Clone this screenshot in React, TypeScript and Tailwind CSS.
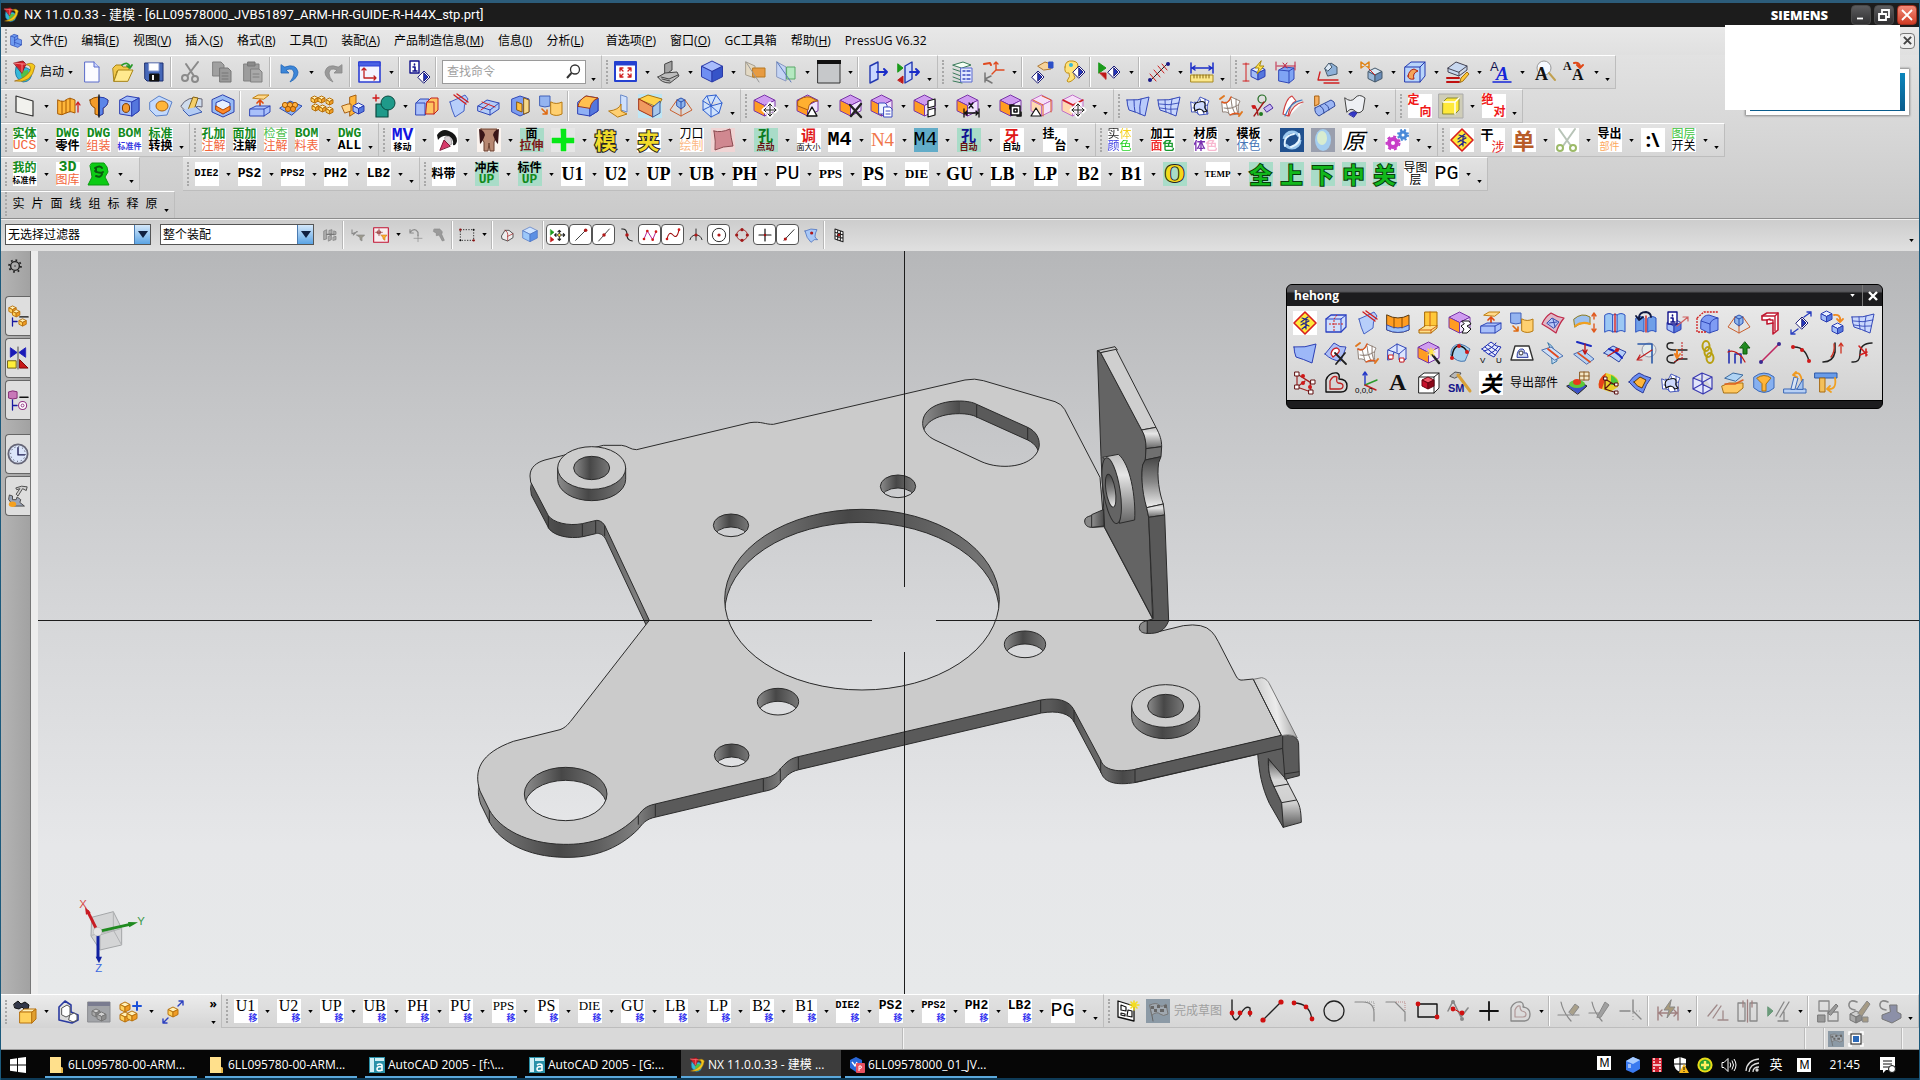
import React from 'react';

type Line = [string, string];
interface Item {
    icon?: string;
    lines?: Line[];
    bg?: string;
    text?: string;
    drop?: boolean;
    sep?: boolean;
    node?: React.ReactNode;
}

// ---------- drawing helpers ----------
const p = (d: string, fill = 'none', stroke = '#333', w = 1) => (
    <path d={d} fill={fill} stroke={stroke} strokeWidth={w} strokeLinejoin="round" strokeLinecap="round" />
);
const dot = (x: number, y: number, fill = '#d01818', r = 2) => <circle cx={x} cy={y} r={r} fill={fill} />;

const BLUE = ['#e6eeff', '#a3bdf8', '#5577dd', '#2c3fb4'];
const GOLD = ['#fff0b8', '#ffd15c', '#f09c24', '#b8720e'];
const SYNC = ['#cf9cf0', '#ff9c22', '#f1e4fd', '#7a35a8'];
const PALE = ['#f6dff8', '#ffd9b0', '#f4e4fa', '#c070c8'];
const GREY = ['#d0d0d0', '#a9a9a9', '#8c8c8c', '#777777'];

const cube = (x: number, y: number, s: number, c = BLUE) => {
    const h = s / 2;
    const q = s / 4;
    return (
        <g stroke={c[3]} strokeWidth="1" strokeLinejoin="round">
            <path d={`M${x + h} ${y}l${h} ${q}l${-h} ${q}l${-h} ${-q}z`} fill={c[0]} />
            <path d={`M${x} ${y + q}l${h} ${q}v${h}l${-h} ${-q}z`} fill={c[1]} />
            <path d={`M${x + s} ${y + q}l${-h} ${q}v${h}l${h} ${-q}z`} fill={c[2]} />
        </g>
    );
};
const move = p('M17 9v14M10 16h14M15 11l2-2 2 2M15 21l2 2 2-2M12 14l-2 2 2 2M22 14l2 2-2 2', 'none', '#fff', 3);
const moveIn = p('M17 10v12M11 16h12M15 12l2-2 2 2M15 20l2 2 2-2M13 14l-2 2 2 2M21 14l2 2-2 2', 'none', '#222', 1);
const triangle = p('M16 13l5 9H11z', '#fff', '#111', 1.4);
const sheet = (c = '#b9cbfb', s = '#3347b8') => p('M1 6Q12 7 23 3L19 22Q10 18 3 16Q1 11 1 6z', c, s);
const grid = p('M8 6Q8 13 9 18M15 5Q13 13 14 20M2 10Q12 12 22 9M3 14Q12 16 20 15', 'none', '#3347b8', 0.9);
const info = (
    <>
        {p('M3 1h9v12H3z', '#fff', '#10108a', 1.4)}
        {p('M7.5 4v1M6 7h2v4M6 11h4', 'none', '#10108a', 1.6)}
    </>
);
const eye = (x: number, y: number) => (
    <>
        {p(`M${x} ${y + 6}l6-6 6 6-6 6z`, '#fff', '#20207a')}
        {p(`M${x + 6} ${y + 2}l4 4-4 4z`, '#2438c0', '#20207a')}
    </>
);
const diamond = (
    <>
        {p('M0 0h24v24H0z', '#fff', 'none')}
        {p('M12 1l11 11-11 11L1 12z', '#ffe83a', '#d81e1e', 1.6)}
        {p('M9 7l6 2M15 6l-7 5M16 10l-8 4M10 12l6 3M14 14l-5 4M13 8v10', 'none', '#23238c', 1.2)}
    </>
);
const logo = (
    <>
        {p('M4 7Q1 18 11 22Q20 22 20 11L15 8z', '#35b8d8', '#146a98', 0.8)}
        {p('M9 11Q8 19 14 21Q18 17 16 10z', '#4fc24a', 'none')}
        {p('M3 21Q20 24 23 6Q20 1 13 5Q20 4 18 11Q14 18 3 21z', '#f3c91b', '#a06a10', 0.7)}
        {p('M2 3l9-2 3 3-4 9z', '#d3202a', '#811018', 0.8)}
        {p('M2 3l8 1 4 0M10 4v8', 'none', '#ff9a9a', 0.8)}
    </>
);
const swept = p('M4 8l9-4 6-3 3 4q-5 6-4 12l-9 6Q6 17 4 8z', '#b7cefa', '#4561c4');
const netUV = (s: string) => p('M3 8q6 4 9-5l9 4q-3 5-1 13l-9 1q-2-4-7-3zM7 8l3 12M12 5q0 8 4 15M17 5q-1 8 2 15M5 14q7 2 14-3', '#fff', s, 0.9);

const icons: Record<string, React.ReactNode> = {
    logo,
    part: <>{p('M3 5l5-3 6 2v5l6 2v8l-6 4-11-4z', '#6f9bf0', '#2142b0')}{p('M3 5l6 2v12M9 7l5-3M14 9l-5 3M9 15l11 4', 'none', '#2142b0')}</>,
    new: <>{p('M5 2h9l5 5v15H5z', '#fbfbff', '#5a6ccc')}{p('M14 2v5h5', '#cdd6ff', '#5a6ccc')}</>,
    open: <>{p('M2 8l3-3h5l2 2h6v4H6L3 21z', '#f2c84a', '#a88414')}{p('M3 21L7 10h15l-5 11z', '#ffe98e', '#a88414')}{p('M11 5q6-4 8 2M16 6l3 2 2-3', 'none', '#2b9a2b', 1.8)}</>,
    save: <>{p('M3 3h18v18H5l-2-2z', '#4668b8', '#1d2f70')}{p('M7 3h10v8H7z', '#fff', '#8899cc')}{p('M8 14h9v7H8z', '#111', '#111')}{p('M10 15h2v5h-2z', '#eee', 'none')}</>,
    cut: <>{p('M19 2L9 15M7 4l8 12', 'none', '#8a8a8a', 2)}<circle cx="6" cy="18" r="3" fill="none" stroke="#8a8a8a" strokeWidth="2" /><circle cx="16" cy="19" r="3" fill="none" stroke="#8a8a8a" strokeWidth="2" /></>,
    copy: <>{p('M3 2h8l3 3v11H3z', '#a0a0a0', '#808080')}{p('M10 8h8l3 3v11H10z', '#9a9a9a', '#777')}{p('M12 13h6M12 16h6M12 19h6', 'none', '#777')}</>,
    paste: <>{p('M3 4h15v17H3z', '#9c9c9c', '#808080')}{p('M7 2h7v4H7z', '#8a8a8a', '#777')}{p('M10 9h8l3 3v10H10z', '#a9a9a9', '#808080')}{p('M12 14h6M12 17h6', 'none', '#808080')}</>,
    undo: p('M3 5v8h8l-3-3q7-3 8 3 0 4-4 9 8-4 8-10Q18 3 7 7z', '#3c86d8', '#2266b8', 0.8),
    redo: p('M21 5v8h-8l3-3q-7-3-8 3 0 4 4 9-8-4-8-10Q6 3 17 7z', '#9a9a9a', '#888', 0.8),
    window: <>{p('M1 2h21v20H1z', '#f4f4ff', '#2c3fd4', 1.6)}{p('M1 2h21v4H1z', '#4a62e4', '#2c3fd4')}{p('M6 8v10h12M4 10l2-2 2 2M16 16l2 2-2 2', 'none', '#c02020', 1.3)}</>,
    info: <>{info}{eye(11, 11)}</>,
    fit: <>{p('M1 2h21v19H1z', '#fff', '#2440d0', 2)}{p('M1 2h21v3H1z', '#2440d0', '#2440d0')}{p('M9 11L6 8m0 3V8h3M14 11l3-3m-3 0h3v3M9 14l-3 3m0-3v3h3M14 14l3 3m-3 0h3v-3', 'none', '#d02020', 1.3)}</>,
    orient: <>{p('M8 4l7-3v9l-7 5z', '#a4a4a4', '#444')}{p('M1 17l7-4 12-1 2 4-9 7q-9 0-12-6z', '#bdbdbd', '#444')}{p('M4 17l8 2 9-4M5 19l8 2', 'none', '#444')}</>,
    cubeBlue: cube(1.5, 1, 21, ['#a8bcfc', '#6f8ff2', '#3654c8', '#2a3aa8']),
    clip: <>{p('M3 2l9 4v12l-9-3z', '#e3d9c4', '#a8a090')}{p('M10 8h12v9H10z', '#e79b42', '#b87820')}{p('M3 2l13 20', 'none', '#999')}</>,
    clip2: <>{p('M3 2l9 5v14l-9-4z', '#c4d4f4', '#8898c0')}{p('M13 7h8v12h-8z', '#b4e8c0', '#58a868')}{p('M3 2l14 20', 'none', '#5a78b8')}</>,
    square: <>{p('M1 2h22v21H1z', '#c6c8ca', '#333')}<rect x="0" y="0" width="24" height="4" fill="#111" /></>,
    door: <>{p('M4 6l8-4v17l-8 4z', '#c9d8ff', '#2338b0', 1.4)}{p('M11 12h10M18 9l3 3-3 3', 'none', '#1a2cc8', 2)}</>,
    doors: <>{p('M1 4l5 4-5 4z', '#1a9a1a', '#1a9a1a')}{p('M1 20l5-4v7z', '#c01818', '#c01818')}{p('M8 6l7-4v17l-7 4z', '#c9d8ff', '#2338b0', 1.4)}{p('M13 12h9M19 9l3 3-3 3', 'none', '#1a2cc8', 2)}</>,
    layers: <>{p('M3 5l10-3 8 3-9 3zM3 9l9 3M3 13l8 3M3 17l8 3M3 21l9 2', '#f4fff4', '#3a7a5a')}{p('M11 8h11v14H11z', '#e2e8ff', '#5a6ad0')}{p('M13 11h2M17 11h3M13 15h2M17 15h3M13 19h2M17 19h3', 'none', '#3a4ac0', 1.4)}</>,
    wcs: <>{p('M15 10V2M15 10h8M15 10l-4 4M13 4l2-2 2 2', 'none', '#e04a20', 1.4)}{p('M3 4l6-1 1 2', 'none', '#e04a20', 2)}{p('M4 22v-9M4 19l6-3M4 19l7 4', 'none', '#777', 1.5)}</>,
    hand: <>{eye(2, 11)}{p('M8 6l7-4 6 2v5l-7 1z', '#f7d39a', '#b07830')}{p('M19 2h4v6h-4z', '#2c50c8', '#2c50c8')}</>,
    parrot: <>{p('M4 7Q4 0 12 1q7 1 4 8-5 4-2 9-6 6-8 3 4-5 2-8Q3 14 4 7z', '#ffe27a', '#c09018')}{dot(10, 5, '#38b8d8')}{eye(12, 6)}</>,
    hide: <>{p('M1 3l7 5-7 5z', '#1a9a1a', '#1a9a1a')}{p('M2 13h6v6z', '#c01818', '#c01818')}{eye(10, 6)}</>,
    measure: <>{p('M3 21L21 3', 'none', '#222')}{p('M3 14l6 7M7 10l6 7M11 6l6 7M15 4l5 6', 'none', '#d02020')}{dot(3, 20, '#1a1a8a')}{dot(21, 4, '#1a1a8a')}</>,
    ruler: <>{p('M1 3v10M23 3v10M2 8h20M5 6L2 8l3 2M19 6l3 2-3 2', 'none', '#1a2cc8', 1.5)}{p('M1 15h22v7H1z', '#fce88c', '#a88a20')}{p('M4 15v3M7 15v3M10 15v3M13 15v3M16 15v3M19 15v3', 'none', '#8a6a10')}</>,
    hsize: <>{cube(8, 6, 14, BLUE)}{p('M3 3v18M0 4h6M0 21h6', 'none', '#d02020')}{p('M18 1l-6 7h4l-2 6 7-8h-4z', '#ffe04a', '#a88a10')}</>,
    wsize: <>{p('M5 10l5-3 10 1v11l-5 4-10-2z', '#7fa4f4', '#3048b8')}{p('M5 10l10 1v12M15 11l5-3', 'none', '#3048b8')}{p('M2 2v8M21 2v8M3 6h18M9 3l4 5M13 3L9 8', 'none', '#c02040')}</>,
    bolt: <>{p('M8 8l6-5 6 4v7l-9 2z', '#8db0d8', '#44586a')}{p('M8 8l4-5 3 4-4 4z', '#dce8f4', '#44586a')}{p('M3 12L1 20h20M7 23h15', 'none', '#d02020', 1.3)}</>,
    bow: <>{p('M1 2l8 6V2L1 8z', 'none', '#e08418', 1.5)}{cube(8, 8, 14, ['#dce8f4', '#9cb8d8', '#6a8cb8', '#44586a'])}{p('M9 9l6 6', 'none', '#d02020')}</>,
    boxhand: <>{p('M2 7l6-5h14v14l-5 6H2z', '#b8d4fa', '#2238b0')}{p('M2 7h15v15M17 7l5-5', 'none', '#2238b0')}{p('M5 16q1-6 6-7l4 2q-6 2-4 8-6 1-6-3z', '#f4a45a', '#b02010')}</>,
    pencilbox: <>{p('M2 8l8-6 11 4-8 6zM2 8v4l11 4v-4M13 16l8-6V6', '#c8d8f0', '#445')}{p('M1 18h12M1 22h12', 'none', '#c01010', 2)}{p('M14 22l1-4 6-6 2 2-6 7z', '#ffc83a', '#a07010')}</>,
    aa: <><text x="1" y="11" fontSize="13" fill="#141450" fontFamily="Liberation Sans">A</text><text x="7" y="20" fontSize="19" fontWeight="700" fontStyle="italic" fill="#1626d8" fontFamily="Liberation Serif">A</text>{p('M4 22h18', 'none', '#1626d8', 1.5)}</>,
    magA: <><circle cx="12" cy="8" r="7" fill="#f4f8ff" stroke="#999" />{p('M17 13l6 7', 'none', '#c0a050', 2)}<text x="3" y="20" fontSize="18" fontWeight="700" fill="#111" fontFamily="Liberation Serif">A</text></>,
    aToA: <><text x="0" y="10" fontSize="12" fontWeight="700" fill="#111" fontFamily="Liberation Serif">A</text><text x="9" y="20" fontSize="16" fontWeight="700" fill="#111" fontFamily="Liberation Serif">A</text>{p('M11 3q6-1 6 4M14 5l3 3 3-3', 'none', '#e04818', 2)}</>,
    plane: p('M3 2l17 5v15L3 18z', '#f2f2ee', '#333', 1.2),
    extrude: <>{p('M2 6q5 3 8 0t9 0v13q-5-3-9 0t-8 1z', '#ffb73a', '#a85a00')}{p('M6 7v13M10 6v13M14 4v14', 'none', '#a85a00')}{p('M22 18V9M20 11l2-3 2 3', 'none', '#d02020', 1.3)}</>,
    revolve: <>{p('M3 6q7-6 18 0 0 6-5 8v6q-4 3-8 0v-6Q3 12 3 6z', '#f39b28', '#8a4a00')}{p('M12 3q6 0 9 3 0 6-5 8v6l-4 2z', '#5c86e8', '#2a3fb0')}{p('M12 1v22', 'none', '#111', 1.4)}</>,
    hole: <>{p('M2 6l7-4 12 2v13l-7 5-12-2z', '#a3bdf8', '#2c3fb4')}{p('M2 6l12 2v14M14 8l7-4', 'none', '#2c3fb4')}{p('M14 8l7-4v13l-7 5z', '#5577dd', '#2c3fb4')}<ellipse cx="8" cy="14" rx="3.6" ry="4.400" fill="#f29a30" stroke="#7a3a00" /></>,
    emboss: <>{p('M1 8l9-6 13 6-5 13-11 1-6-6z', '#c4dafc', '#5a80c8')}<ellipse cx="13" cy="12" rx="6" ry="5" fill="#ffb53a" stroke="#a86010" /></>,
    fan: <>{p('M1 12Q7 1 22 5v8q-8-3-13 7z', '#cfdcec', '#667')}{p('M8 16l5-13 5 1-5 15z', '#f5cf6a', '#866414')}{p('M3 16l6 6 13-4-6-5', '#b4ccf4', '#3a5ab0')}</>,
    pocket: <>{p('M12 1l11 5v12l-11 5-11-5V6z', '#9abcf4', '#2a3fb0')}{p('M12 6l7 3v7l-7 4-7-4V9z', '#e8f0ff', '#2a3fb0')}{p('M5 12l7 4 7-4v4l-7 4-7-4z', '#ff8a2a', '#b84a00')}</>,
    draft: <>{p('M5 4l5-3h11l-5 4z', '#ffd98a', '#c08010')}{p('M12 16V7M9 9l3-3 3 3', 'none', '#e04a10', 1.7)}{p('M2 15l6-3h14v6l-6 4H2z', '#a9c0fa', '#3048b8')}{p('M2 15h14v7M16 15l6-3', 'none', '#3048b8')}</>,
    pattern: <>{p('M1 14l10-7 12 5-10 9z', '#8fb2f2', '#2a4ab0')}{[4, 9, 14].map((x) => <circle key={x} cx={x + 2} cy={11} r="2.6" fill="#ffb040" stroke="#a85a00" />)}{[7, 12].map((x) => <circle key={x} cx={x + 2} cy={15} r="2.6" fill="#f59320" stroke="#a85a00" />)}</>,
    cubes: <>{[[1, 2], [8, 2], [16, 4], [2, 10], [9, 11], [16, 13]].map(([x, y]) => <g key={`${x}-${y}`}>{cube(x, y, 7, GOLD)}</g>)}</>,
    mirror: <>{p('M9 3l6-2v17l-6 4z', '#ffb53a', '#a86010')}{p('M1 12l6-2h3v7l-6 2z', '#ffd58a', '#a86010')}{cube(12, 9, 11, BLUE)}</>,
    unite: <>{p('M4 10h12v13H4z', '#1f9a8a', '#0a4a40', 1.2)}<circle cx="16" cy="9" r="7" fill="#1f9a8a" stroke="#0a4a40" />{p('M4 1v6M1 4h6', 'none', '#d01818', 1.4)}</>,
    blocks: <>{p('M1 9l4-4h9v12l-4 4H1z', '#a9c0fa', '#3048b8')}{p('M1 9h9v12', 'none', '#3048b8')}{p('M12 8l4-4h7v12l-4 4h-8z', '#ffc460', '#c02020')}{p('M12 8h7v12', 'none', '#c02020')}</>,
    trim: <>{swept}{p('M8 1l12 9M11 0l11 8', 'none', '#d02020', 1.4)}</>,
    split: <>{p('M1 12l9-6 12 3v6l-9 6-12-4z', '#b4ccf8', '#3048b8')}{p('M1 12l12 4 9-7M13 16v5', 'none', '#3048b8')}{p('M5 8l13 5M4 16l8-6', 'none', '#d02020')}</>,
    wallblk: <>{p('M4 5l8-3 9 3v13l-9 4-8-4z', '#7d9df0', '#3048b8')}{p('M9 8l5 2v8l-5-2z', '#ffc040', '#8a5a10')}{p('M16 4l5 2v12l-5 2z', '#f5d88a', '#8a5a10')}</>,
    unform: <>{p('M1 2h10v10q-5 2-10 0z', '#94b4f0', '#4060b8')}{p('M12 8q5 3 11 0v12q-6 3-11 0z', '#ffd070', '#b87a10')}{p('M3 15l5 5M8 16v4H4', 'none', '#e06a10', 1.6)}</>,
    edgeblend: <>{p('M2 8l8-6 12 2v13l-8 5-12-2z', '#8fb0f5', '#2c3fb4')}{p('M14 9l8-5v13l-8 5z', '#5577dd', '#2c3fb4')}{p('M2 12q1-6 8-10l12 2q-7 3-8 10z', '#ffc050', '#a83a10')}</>,
    faceblend: <>{p('M14 1l6 2v15l-6-2z', '#cfe0fc', '#6a8ac8')}{p('M2 17q10-1 12-7v7l6 3-9 3z', '#ffcf70', '#b87a10')}</>,
    chamfer: <>{p('M0 0h24v24H0z', '#bfe6f4', 'none')}{p('M1 5l9-4 14 4-4 8z', '#ffd24a', '#a87410')}{p('M1 5l14 8v10L1 16z', '#f09a60', '#a83010')}{p('M15 13l7-6v12l-7 4z', '#a8c8ec', '#3a5a98')}</>,
    draftbody: <>{p('M8 6l4-2 4 2v6l-4 3-4-3z', '#8fb6ec', '#2a50b0')}{p('M8 6l4 2 4-2M12 8v7', 'none', '#2a50b0')}{p('M8 6L1 16l11 6 11-6-7-10M12 15v7', 'none', '#c86030')}</>,
    shell: p('M7 2l9-1 6 8-3 10-8 4-8-7V7zM3 7l8 5 11-3M11 12v11M7 2l4 10M16 1l-5 11M3 16l8-4 8 7', '#cfe2fc', '#2f5fd0'),
    s1: <>{cube(1, 1, 21, SYNC)}{move}{moveIn}</>,
    s2: <>{cube(1, 1, 21, SYNC)}{p('M2 7q5-5 12-4l8 4q-9-1-10 9l-10-4z', '#ffb030', '#a85a10')}{triangle}</>,
    s3: <>{cube(1, 1, 21, SYNC)}{p('M11 11l11 12M22 10L12 22', 'none', '#222', 2.4)}</>,
    s4: <>{cube(1, 1, 21, SYNC)}{p('M9 9h6l2 2v9H9z', '#eef4ff', '#3a4ac0')}{p('M14 13h6l2 2v8h-8z', '#fff', '#3a4ac0')}{p('M16 17h4M16 20h4', 'none', '#3a4ac0')}</>,
    s5: <>{cube(1, 1, 21, SYNC)}{p('M15 7l7-2v7l-7 2zM15 16l7-2v7l-7 2z', '#fff', '#111', 1.2)}</>,
    s6: <>{cube(1, 1, 21, SYNC)}{p('M8 15v8M23 15v8M9 19h13M11 17l-2 2 2 2M20 17l2 2-2 2M13 9l4 5M17 9l-4 5', 'none', '#111', 1.3)}</>,
    s7: <>{cube(1, 1, 21, SYNC)}{p('M12 12h9v9h-9z', '#fff', '#111', 1.4)}{p('M11 11h4M11 11v4M22 22h-4M22 22v-4M15 15h3v3h-3z', 'none', '#111', 1.6)}</>,
    s8: <>{cube(1, 1, 21, PALE)}{p('M12 2l9 4v12M3 6l10 5v11', 'none', '#e05a20')}{p('M6 14l5 8H1z', '#fff', '#111', 1.2)}</>,
    s9: <>{cube(1, 1, 21, PALE)}{p('M2 6l10 5 10-5', 'none', '#d02020', 1.5)}{move}{moveIn}</>,
    ruled: <>{sheet()}{p('M8 6Q8 13 9 18M15 5Q13 13 14 20', 'none', '#3347b8')}</>,
    mesh: <>{sheet('#cad8fd')}{grid}</>,
    nside: <>{netUV('#3347b8')}{p('M7 17q-3-8 4-9 7-2 6 4-1 2 2 5l-3 1q-3-5-9-1z', '#cdd9fd', '#111', 1.2)}</>,
    enlarge: <>{netUV('#8a7a70')}{p('M3 8q6 3 9-5M11 21q5-3 9-1', 'none', '#e05a20', 1.4)}{p('M1 5l4-3M20 22l3-4', 'none', '#e07820', 2)}</>,
    xform: <><circle cx="12" cy="5" r="4" fill="none" stroke="#206a20" strokeWidth="1.2" />{p('M2 12q5 0 6 9M4 22L14 8', 'none', '#a01818', 1.3)}{p('M14 14l6-4 3 4-6 4z', '#c8b8f4', '#4a2aa0')}{dot(4, 13)}{dot(11, 20, '#207a20')}</>,
    ribbon: <>{p('M2 20q3-16 9-18l4 5q-6 2-8 15zM8 22q4-12 14-14', '#fff', '#d04040', 1.2)}{p('M4 22q5-14 17-16', 'none', '#3a7ac0', 1.2)}</>,
    tube: <>{p('M3 2h4v8l-4 2z', '#f8b060', '#a86010')}{p('M3 14l16-8q4 1 4 6L7 22q-5-3-4-8z', '#9cb6f4', '#2f489a')}{p('M8 12q4 2 4 7M13 10q4 2 4 6', 'none', '#2f489a')}</>,
    flag: <>{p('M2 4q6 5 10 0t10 0l-2 12q-4 5-8 1t-8 1z', '#eef0f4', '#444')}{p('M6 20q4-4 8-1l-3 4z', '#3338c8', '#2a2aa0')}</>,
    ybox: <>{p('M0 0h24v24H0z', '#cfcdb8', '#aaa')}{p('M4 8l4-4h12v12l-4 4H4z', '#ffe93a', '#8a8a30')}{p('M4 8h12v12M16 8l4-4', 'none', '#fff', 1.4)}</>,
    brush: <>{p('M0 0h24v24H0z', '#fff', 'none')}{p('M3 7Q8 0 15 3q8 3 8 10-1 5-4 4 1-7-5-9-6-1-10 4z', '#161616', 'none')}{p('M11 9q4-2 6 1l1 6-6 3z', '#d8d0d4', '#777', 0.6)}{p('M6 22l4-10 6 6z', '#d8386a', '#801838')}</>,
    legs: <>{p('M0 0h24v24H0z', '#fbf3ee', 'none')}{p('M4 1h16q1 7-3 13v9h-4l-1-8-1 8H7v-9Q2 8 4 1z', '#b88872', '#6a4030')}{p('M2 1q5 1 6 6-3 8-5 9zM22 1q-5 1-6 6 3 8 5 9z', '#3a1618', 'none')}</>,
    plus: <><rect width="24" height="24" fill="#e6e6e6" />{p('M10 1h5v9h8v5h-8v8h-5v-8H1v-5h9z', '#06e816', '#06e816', 0.5)}</>,
    cloth: <>{p('M0 0h24v24H0z', '#f0d4d4', 'none')}{p('M3 3q7 2 16-2 1 9 3 17-10 0-18 4 1-8-1-19z', '#d08890', '#8a4a50')}</>,
    swirl: <><rect width="24" height="24" fill="#20508e" /><circle cx="12" cy="12" r="8" fill="none" stroke="#9cc8ee" strokeWidth="3" strokeDasharray="20 6" />{p('M5 18Q3 8 14 6M19 6q3 9-8 13', 'none', '#e4f4ff', 2)}</>,
    orb: <><rect width="24" height="24" fill="#9a9fae" /><ellipse cx="12" cy="12" rx="8" ry="11" fill="#a4cdf0" /><ellipse cx="11" cy="10" rx="5" ry="7" fill="#d8ecd0" /></>,
    gears: <><rect width="24" height="24" fill="#fff" /><circle cx="8" cy="15" r="4" fill="none" stroke="#c83cc8" strokeWidth="4" /><circle cx="8" cy="15" r="6.5" fill="none" stroke="#c83cc8" strokeWidth="2" strokeDasharray="3 3" /><circle cx="18" cy="7" r="3" fill="none" stroke="#4a8ad8" strokeWidth="3" /><circle cx="18" cy="7" r="5" fill="none" stroke="#4a8ad8" strokeWidth="2" strokeDasharray="2 2" /></>,
    scissors: <><rect width="24" height="24" fill="#fff" />{p('M4 1l12 17M20 1L8 18', 'none', '#b8c4b8', 2)}<circle cx="5" cy="20" r="3" fill="none" stroke="#9cba68" strokeWidth="2" /><circle cx="18" cy="20" r="3" fill="none" stroke="#9cba68" strokeWidth="2" /></>,
    genie: <>{p('M5 1h12l3 4 1 5-3 5 4 8H1l4-8-1-6-1-5z', '#0ccc14', '#0a9a10')}{p('M8 6q5-3 7 0M8 9q5 3 8 1M9 14q5 2 6-2M9 6v4', 'none', '#0a5a10', 2)}</>,
    diamond,
    // selection bar
    sGrey: <>{p('M3 6l4-2v14l-4 1zM11 5l4-1v6l-4 1zM10 14l4-2v7l-4 2zM18 6l3 1v4l-3 1zM17 15l4-1v5l-4 1z', '#aaa', '#777')}{p('M7 11h11', 'none', '#777', 2)}</>,
    sFilter: <>{p('M3 4v6l8-3M5 12l5-5', 'none', '#888', 1.6)}{p('M10 12h12l-4 4v5l-3-2v-3z', '#9c9a8c', '#888')}</>,
    sRed: <>{p('M1 1h22v22H1z', '#f8eef0', '#c01030', 1.6)}{p('M9 3v10M4 8h10M7 6h4v4H7z', 'none', '#8a2020')}{p('M12 12h9l-3 4v4l-3-2v-2z', '#ffb030', '#c06a10', 0.8)}</>,
    sUndo: <>{p('M3 8q7-8 12 0v5M3 4v5h5', 'none', '#8a8a8a', 1.8)}{p('M9 17h12M15 12v10', 'none', '#8a8a8a')}</>,
    sBrush: p('M5 3h8l4 4-1 4 4 9-3 1-5-9-4 1V9L4 7z', '#9a9a9a', '#888'),
    sMarq: <><rect x="2" y="4" width="20" height="16" fill="none" stroke="#222" strokeWidth="1.3" strokeDasharray="2 2" />{dot(2, 4, '#8a1010', 1.8)}{dot(22, 20, '#8a1010', 1.8)}{dot(22, 4, '#111', 1.4)}{dot(2, 20, '#111', 1.4)}</>,
    sEdge: <>{p('M4 13l5-8h6l6 5v6l-8 5-8-3z', '#eee', '#333', 1.2)}{p('M9 5q5 2 4 9v6M13 14l8-4', 'none', '#a01010')}</>,
    sCube: cube(1, 0, 22, ['#cfe4ff', '#9cc8fa', '#5c90e4', '#4a70c0']),
    pSnap: <>{p('M1 4l5 4-5 4z', '#1a9a1a', '#1a9a1a')}{p('M1 15l5 4-5 3z', '#c01818', '#c01818')}{p('M14 5v15M7 12h15M12 7l2-2 2 2M12 18l2 2 2-2M9 10l-2 2 2 2M20 10l2 2-2 2', 'none', '#222', 1.6)}<circle cx="14" cy="12" r="2.400" fill="#ffe24a" stroke="#333" /></>,
    pEnd: <>{p('M4 20L20 4', 'none', '#222', 1.3)}{dot(19, 5, '#b01818', 2.6)}</>,
    pMid: <>{p('M4 21L20 3', 'none', '#222', 1.3)}{dot(12, 12, '#b01818', 2.6)}</>,
    pHook: <>{p('M4 3q8-1 8 9 0 8 8 9', 'none', '#222', 1.6)}{dot(12, 12, '#b01818', 2.6)}</>,
    pZig: <>{p('M3 18L8 6l8 13 5-12', 'none', '#b01890', 1.4)}{dot(3, 18)}{dot(8, 6)}{dot(16, 19)}{dot(21, 7)}</>,
    pSpl: <>{p('M3 18q3-13 9-6t9-8', 'none', '#a01010', 1.6)}{dot(3, 18)}{dot(21, 4)}</>,
    pInt: <>{p('M3 19q2-7 9-7t9 7M12 3v17', 'none', '#222', 1.4)}{dot(12, 12, '#b01818', 2.4)}</>,
    pCtr: <><circle cx="12" cy="12" r="10" fill="none" stroke="#222" strokeWidth="1.4" />{dot(12, 12, '#b01818', 2.4)}</>,
    pQuad: <><circle cx="12" cy="12" r="8" fill="none" stroke="#a02020" strokeWidth="1.3" />{dot(12, 4, '#a01818', 2.4)}{dot(12, 20, '#a01818', 2.4)}{dot(4, 12, '#a01818', 2.4)}{dot(20, 12, '#a01818', 2.4)}</>,
    pPlus: <>{p('M12 3v18M3 12h18', 'none', '#111', 1.8)}{dot(12, 12, '#a01010', 1.8)}</>,
    pOn: <>{p('M6 20L21 4', 'none', '#222', 1.4)}{dot(8, 18, '#b01818', 2.4)}</>,
    pFace: <>{p('M3 6q9-5 18-2-3 5-3 10 0 3 4 5-5-2-10 4-7-6-9-17z', '#a9c8f6', '#3a62b8')}{dot(13, 9, '#b01818', 2.4)}</>,
    pGrid: <>{p('M6 3l12 4v15L6 18zM6 8l12 4M6 13l12 4M10 5v15M14 6v15', '#fff', '#222', 1.6)}{dot(12, 12, '#b01010', 1.8)}</>,
    // floating palette
    h2: <>{p('M2 8l5-4h15v12l-5 5H2z', '#cfdefc', '#2a3fc0', 1.3)}{p('M2 8h15v13M17 8l5-4', 'none', '#2a3fc0')}<path d="M13 4l-3 4v13M5 13h14" fill="none" stroke="#d02020" strokeDasharray="2 1" /></>,
    h4: <>{p('M1 4q11 6 22 0v15q-11 5-22 0z', '#ff9d20', '#5a3a10')}{p('M1 14q11 6 22 0v5q-11 5-22 0z', '#9cc0f8', '#3a50b0')}{p('M8 7v10M16 7v10', 'none', '#8a4a00')}</>,
    h5: <>{p('M8 1h12v14H8z', '#ffc83a', '#a86a00')}{p('M8 15l-6 4v3h12l6-5v-2', '#ffdf8a', '#a86a00')}{p('M13 1v14M2 19h12v3M14 19l6-4', 'none', '#d06010')}</>,
    h6: <>{cube(1, 1, 21, SYNC)}{p('M14 10h7l2 3-4 2 4 3-4 4h-5l2-4-3-3 3-2z', '#fff', '#111')}</>,
    h9: <>{p('M1 13q3-7 9-11 6 4 13 5-5 6-8 15Q8 17 1 13z', '#dfb8c8', '#c02848', 1.2)}{p('M6 12l5-5 7 4-5 6z', '#b8c8f8', '#3a50b0')}{p('M8 12l8-1M12 8l2 8', 'none', '#3a50b0')}</>,
    h10: <>{p('M2 8q8-7 16-2v7q-8-3-15 3z', '#9cc0ee', '#8a7a20')}{p('M3 15q7-5 15-2', 'none', '#f0a020', 2)}{p('M22 3v5M22 13v7M20 5l2-3 2 3M20 18l2 3 2-3', 'none', '#e05a20', 1.4)}</>,
    h11: <>{p('M2 4q4-3 8 0v17q-4-3-8 0zM14 4q4-3 8 0v17q-4-3-8 0z', '#9cc8f4', '#2a50c0')}{p('M10 4q2-2 4 0v17q-2-2-4 0z', '#e8e8f8', '#2a50c0')}{p('M12 3v18', 'none', '#d02020', 1.4)}</>,
    h12: <>{p('M2 7q4-3 8 0v14q-4-3-8 0zM14 7q4-3 8 0v14q-4-3-8 0z', '#6f9fe8', '#2a50c0')}{p('M12 5v16', 'none', '#d02020', 1.4)}{p('M5 7q0-6 7-6 5 1 5 5M2 5l3 4 4-3', 'none', '#101840', 1.8)}</>,
    h13: <>{cube(2, 8, 14, BLUE)}{info}{p('M12 15l11-9M18 6h5v4', 'none', '#d06060', 1.2)}</>,
    h14: <>{p('M5 10q2-6 8-6l9 3v12l-9 3-8-4z', '#7f9cf4', '#3048b8')}{p('M5 10l9 3V22M14 13q1-5 8-6', 'none', '#3048b8')}<path d="M1 7l7-6h14M1 7v14h10" fill="none" stroke="#d02020" strokeDasharray="2 1" strokeWidth="1.3" /></>,
    h16: <>{p('M4 5l5-3h11v17l-5 4V12l-6 1V9H4z', '#fff', '#c01830', 1.6)}{p('M4 5h13v15M17 5l3-3M12 9h3v3M9 9l3-1', 'none', '#c01830', 1.4)}</>,
    h17: <>{eye(7, 6)}{p('M15 6l7-5M18 1h4v4M9 18l-7 5M2 19v4h4', 'none', '#2c40c0', 1.4)}</>,
    h18: <>{cube(1, 0, 11, BLUE)}{cube(12, 12, 11, BLUE)}{p('M14 4q7-1 6 6M17 8l3 3 3-3', 'none', '#f08a20', 1.8)}</>,
    i1: sheet('#9db8f8', '#2c3fb4'),
    i2: <>{p('M1 13L10 2q6 5 12 4l-5 14Q8 20 1 13z', '#aebff6', '#3347b8')}{p('M7 13q1-6 6-6 4 2 1 5l-5 4z', '#fff', '#d02020', 1.3)}{p('M11 12l11 11M21 12L12 23', 'none', '#222', 1.8)}</>,
    i4: <>{p('M2 9l9-6 9 4v11l-4 3-3-2v-6l-5-2-2 7-4 1z', '#dce6fe', '#3347b8')}{p('M2 9l6 2M11 3v8M20 7l-7 6M15 21l5-3', 'none', '#3347b8')}{p('M3 14h4v4H3zM14 17h4v4h-4z', '#fff', '#d02020')}</>,
    i5: <>{cube(1, 1, 21, SYNC)}{p('M14 12l8 10', 'none', '#222', 2.4)}{p('M14 7v8M10 11h8M11 8l6 6M17 8l-6 6', 'none', '#ffe24a', 1.2)}</>,
    i6: <>{p('M3 14Q2 4 12 3q5 1 10 5l-5 12Q9 22 3 14z', '#a8d0ec', '#4a78b0')}{p('M4 17q1-13 8-12 5 1 7 6', 'none', '#111', 1.4)}{dot(4, 17)}{dot(11, 5)}{dot(19, 11)}</>,
    i7: <>{p('M3 8l9-7q5 5 10 5l-7 10Q9 14 3 8zM6 6l10 8M9 4l9 6M5 10q8-2 12-8M10 13q6-2 9-7', '#e8ecff', '#1a2ab0')}<text x="1" y="22" fontSize="8" fontFamily="Liberation Sans">V</text><text x="17" y="22" fontSize="8" fontFamily="Liberation Sans">U</text></>,
    i8: <>{p('M5 5h14l4 14H1z', '#fff', '#333', 1.4)}{p('M7 16q0-9 6-8 2 1 1 4h3l1 4z', '#cfd8f4', '#2a3aa0')}<circle cx="11" cy="12" r="2" fill="#fff" stroke="#333" /></>,
    i9: <>{p('M7 2q8 4 9 18l-5 3Q11 10 7 2z', '#c4dcf4', '#3a78a8')}{p('M1 9l9-3 12 9-8 4z', '#cfe0f8', '#4a70b0')}{p('M7 8l10 8', 'none', '#e04820', 1.8)}</>,
    i10: <>{p('M2 13l9-4 11 9-7 5z', '#b8d4f4', '#4a6ab0')}{p('M6 12l12 9', 'none', '#e05020', 1.6)}{p('M5 1l14 4', 'none', '#1a2ac0', 2)}{p('M13 3v9M11 9l2 4 2-4', 'none', '#c01818', 1.4)}</>,
    i11: <>{p('M1 12q5-5 9-7 6 3 13 6l-7 10Q8 15 1 12z', '#b8d0f8', '#2a40a0')}{p('M6 8q7 2 13 9', 'none', '#1a2ac0', 2)}{p('M5 15l11-7', 'none', '#c01818', 1.4)}{dot(14, 9)}</>,
    i12: <><circle cx="15" cy="9" r="7" fill="#e4ecec" stroke="#99a" />{p('M4 3h14v19', 'none', '#2a58a8', 1.6)}{p('M18 9L4 18M6 14l-3 5 5 0', 'none', '#c02020', 1.2)}</>,
    i13: <>{p('M8 2Q2 1 2 5t7 4h13M8 14q-6 0-6 4t7 4l4-4h9', 'none', '#222', 1.4)}{p('M12 9v7M10 13l2 4 3-4', 'none', '#f08020', 2)}<path d="M17 1v18M9 21l9-4" fill="none" stroke="#c01818" strokeDasharray="2 1" /></>,
    i14: <>{[3, 9, 15].map((y) => <ellipse key={y} cx={9 + y / 3} cy={y + 2} rx="3.5" ry="5" fill="none" stroke="#b8a010" strokeWidth="2" />)}</>,
    i15: <>{p('M2 22V9M8 22v-9h6v9', 'none', '#2430b0', 1.6)}{p('M1 11q6-3 14 5l3 5', 'none', '#c01818', 1.3)}{p('M18 1l5 6h-3v6h-4V7h-3z', '#1f8a1f', '#0a5a0a')}</>,
    i16: <>{p('M3 21L21 3', 'none', '#c02860', 1.6)}{dot(3, 21, '#3a2a90')}{dot(21, 3, '#3a2a90')}</>,
    i17: <>{p('M4 6q12-1 16 14', 'none', '#222', 1.4)}{dot(4, 6)}{dot(13, 9)}{dot(20, 20)}</>,
    i18: <>{p('M3 21q10 0 12-10V2', 'none', '#222', 1.6)}{p('M14 3q1 8-3 13M21 3v9M19 5l2-3 2 3', 'none', '#d03020', 1.3)}</>,
    i19: <>{p('M1 21q8 1 8-8 0-11 12-11', 'none', '#222', 1.5)}{p('M8 5l8 9M9 14l7-3M15 8v7', 'none', '#d02020', 1.6)}</>,
    j1: <>{p('M4 3v13l14 5-1-10zM4 3l14 9M4 16l8-6', 'none', '#a02020', 1.2)}{p('M2 1h4v4H2zM2 14h4v4H2zM16 19h4v4h-4zM18 9h4v4h-4z', '#fff', '#601010')}{dot(10, 5)}{dot(10, 12)}{dot(17, 16)}</>,
    j2: <>{p('M2 21V9q3-8 11-7 3 1 2 6 8 0 8 7 0 6-6 6z', 'none', '#111', 1.4)}{p('M6 18v-8q3-6 7-4-1 5 1 6 5 0 5 3 0 3-4 3z', 'none', '#c02020', 1.3)}</>,
    j3: <>{p('M10 14V2M8 4l2-3 2 3', 'none', '#2438c8', 1.4)}{p('M10 14l12-5', 'none', '#2a9a2a', 1.4)}{p('M10 14l11 5', 'none', '#c02020', 1.4)}<text x="0" y="22" fontSize="8" fontFamily="Liberation Sans">0,0,0</text></>,
    j4: <text x="3" y="19" fontSize="24" fontWeight="700" fontFamily="Liberation Serif" fill="#111">A</text>,
    j5: <>{p('M2 6l5-4h15v15l-5 5H2z', '#fff', '#222')}{p('M2 6h15v16M17 6l5-4', 'none', '#222')}{cube(5, 6, 12, ['#f45a6a', '#c8102a', '#8a0818', '#6a0410'])}</>,
    j6: <><text x="0" y="21" fontSize="11" fontWeight="700" fill="#14148a" fontFamily="Liberation Sans">SM</text>{p('M2 5l5-4 6 1-2 3-4 2z', '#b8b8b8', '#555')}{p('M10 4l12 16', 'none', '#d8a038', 3)}</>,
    j9: <>{p('M1 15l11-5 9 5-9 8z', '#3a50c8', '#222')}<ellipse cx="11" cy="13" rx="8" ry="4" fill="#5cc83a" /><ellipse cx="11" cy="11" rx="4" ry="3" fill="#e83a1a" />{p('M14 1h9v8h-9zM14 5h9M18 1v8', '#f4e8c8', '#8a5a20')}</>,
    j10: <>{p('M2 17Q0 8 9 2l7 2q8 5 5 12l-8 5z', '#e8d02a', 'none')}{p('M2 17Q0 8 9 2q-1 8-4 16z', '#e8401a', 'none')}{p('M14 4q8 4 7 10l-7 0z', '#4ac83a', 'none')}{p('M8 8v10l12 4M8 8l10 6M8 18l6-6', 'none', '#5a1010', 1.2)}{p('M7 6h3v3H7zM18 12h3v3h-3zM18 20h3v3h-3z', '#fff', '#5a1010')}</>,
    j11: <>{p('M1 11q4-6 10-9 5 3 12 5-5 6-8 15Q7 19 1 11z', '#6a8cf0', '#2a3a9a')}{p('M6 11l6-5 6 3-4 8q-5-1-8-6z', '#ffb53a', '#5a3a10')}</>,
    j13: p('M3 7l9-5 10 4v12l-9 5L3 18zM3 7l10 4 9-5M13 11v12M12 2v11l10 5M12 13l-9 5', '#e2e6fb', '#3a3ab0', 1.2),
    j14: <>{p('M4 7l8-5 10 2-7 6z', '#b0d4f4', '#3a6aa0')}{p('M1 15l7-3h14v5l-6 5H3z', '#ffc860', '#a87010')}{p('M4 13l10 0 8-4', 'none', '#e06020', 1.4)}</>,
    j15: <>{p('M2 6q10-8 20 0v11q-10 9-20 0z', '#86b0f0', '#3a68b8')}{p('M5 7q7-5 14 0l-5 6v7h-4v-7z', '#ffb53a', '#a87010')}</>,
    j16: <>{p('M1 18h22v4H1z', '#b8d0f4', '#3a68b8')}{p('M8 18L11 6l4 1-3 11z', '#d8e4f4', '#3a68b8')}{p('M10 4q8-6 9 8M13 1l-3 3 4 2', 'none', '#f09a20', 1.8)}{p('M14 18l6-10v10z', '#a4c4f0', '#3a68b8')}</>,
    j17: <>{p('M1 2h22v5H1z', '#6a9ce8', '#2a58a8')}{p('M6 7h5v14H6z', '#f4c05a', '#a86a10')}{p('M21 7q2 12-7 11M16 15l-3 3 4 3', 'none', '#f0a020', 1.8)}</>,
    // bottom bars
    binoc: <>{p('M1 4l4-3 3 3 4-2 4 3-1 4-4 0-2-2-3 2-4-1z', '#33384a', '#111')}{p('M7 12l4-3h12l-4 3z', '#fff0b8', '#b8720e')}{p('M7 12h12v11H7z', '#ffd15c', '#b8720e')}{p('M19 12l4-3v10l-4 4z', '#e0a030', '#b8720e')}</>,
    wire: <>{p('M3 7l6-6 6 4v7l7 3v5l-6 3-13-3z', 'none', '#2a3aa0', 1.6)}{p('M6 8l5-3 3 2v8l-4 2-4-2zM14 15l4-2 3 2v5l-4 2-4-2z', '#fff', '#555')}</>,
    greyAsm: <>{p('M1 2h22v20H1z', '#a2a4a8', '#8a8c90')}{p('M1 2h22v4H1z', '#7a7c90', 'none')}{cube(5, 9, 8, GREY)}{cube(10, 12, 9, GREY)}</>,
    addCmp: <>{cube(2, 2, 10, GOLD)}{cube(2, 12, 10, GOLD)}{cube(9, 11, 10, GOLD)}{p('M19 2v8M15 6h8', 'none', '#1a50d8', 2)}</>,
    moveCmp: <>{cube(7, 7, 10, GOLD)}{p('M17 6l4-4M18 1h4v4M7 18l-4 4M2 19v4h4', 'none', '#2c40c0', 1.4)}</>,
    sketch: <>{p('M2 2l16 5v15L2 18z', '#fff', '#111', 1.3)}{p('M5 6l5 2v4l-5-1zM5 14l4 1v2l-4-1zM12 11l4 1v6l-5-1z', 'none', '#111', 1.2)}{p('M18 2v9M14 6h9M15 3l6 6M21 3l-6 6', 'none', '#f4dc20', 1.6)}</>,
    finish: <><rect width="24" height="24" fill="#8c9aa6" />{p('M7 22L4 6', 'none', '#666')}{p('M4 6q6-3 9 0t7-1l2 10q-5 3-8 0t-8 1z', '#a0a8b0', '#777')}{p('M5 7h3v3H5zM11 6h3v3h-3zM8 10h3v3H8zM14 10h4v3h-4zM18 6h3v3h-3z', '#666', 'none')}</>,
    bSpl: <>{p('M3 1v14q3 11 8 1t10-7v8', 'none', '#222', 1.4)}{dot(3, 14, '#d01010', 2.4)}{dot(11, 14, '#d01010', 2.4)}{dot(21, 14, '#d01010', 2.4)}</>,
    bLine: <>{p('M3 21L21 3', 'none', '#222', 1.3)}{dot(3, 21, '#d01010', 2.6)}{dot(21, 3, '#d01010', 2.6)}</>,
    bArc: <>{p('M3 4q16 0 18 17', 'none', '#222', 1.3)}{dot(3, 4, '#d01010', 2.4)}{dot(15, 8, '#d01010', 2.4)}{dot(21, 20, '#d01010', 2.4)}</>,
    bCircle: <circle cx="12" cy="12" r="10" fill="none" stroke="#222" strokeWidth="1.3" />,
    bFillet: <>{p('M2 3h8q11 0 11 11v8', 'none', '#888', 1.2)}<path d="M12 3h9v9" fill="none" stroke="#999" strokeDasharray="1 1" /></>,
    bChamfer: <>{p('M2 3h9l10 10v9', 'none', '#888', 1.2)}<path d="M12 3h9v9" fill="none" stroke="#b88" strokeDasharray="1 1" /></>,
    bRect: <>{p('M3 5h19v13H3z', 'none', '#111', 1.4)}{dot(3, 5, '#d01010', 2.4)}{dot(22, 18, '#d01010', 2.4)}</>,
    bStudio: <>{p('M2 12l5-10 8 16 7-9', 'none', '#888', 1.6)}{p('M6 9l9 5', 'none', '#d01010')}{dot(7, 10, '#d01010', 2.4)}{dot(16, 14, '#d01010', 2.4)}{dot(7, 3, '#888')}{dot(16, 20, '#888')}</>,
    bPlus: p('M12 3v18M3 12h18', 'none', '#111', 1.8),
    bOff: <>{p('M3 22V9q3-7 10-6 3 1 2 5 7 1 7 7 0 7-6 7z', 'none', '#888', 1.3)}{p('M7 18v-7q2-5 5-4 0 4 2 5 4 1 4 3 0 3-3 3z', 'none', '#b09898', 1.2)}</>,
    bTrim1: <>{p('M4 3q2 10 10 19M1 16h14M10 16h12', 'none', '#888', 1.2)}{p('M12 13l6-8 4 3-6 8z', '#a9a08a', '#888')}</>,
    bTrim2: <>{p('M4 3q2 10 10 19M1 14h14', 'none', '#888', 1.2)}{p('M9 18l8-15 4 3-8 12z', '#a0a0a0', '#888')}</>,
    bTrim3: <>{p('M14 1v12M1 12h10M14 12l8 8', 'none', '#888', 1.4)}<path d="M14 12h9M14 14v9" fill="none" stroke="#999" strokeDasharray="1 2" /></>,
    bDim: <>{p('M2 8v13M22 8v13M3 14h18M6 11l-3 3 3 3M18 11l3 3-3 3', 'none', '#a08080', 1.4)}{p('M15 1l-7 10h5l-2 8 8-11h-5z', '#a89a7a', '#888')}</>,
    bGeo: p('M3 17L12 6M8 19L16 7M13 21h10M18 21v-9', 'none', '#a08a8a', 1.3),
    bSym: <>{p('M2 4h7v18H2zM14 4h7v18h-7z', 'none', '#888', 1.3)}{p('M11.5 1v22M7 2v6M16 2v6', 'none', '#a08080', 1.3)}</>,
    bCon: <>{p('M1 8l5 4-5 5z', '#6a9a7a', '#6a9a7a')}{p('M9 17l8-14M13 18l9-15M11 22h10M17 22v-9', 'none', '#888', 1.3)}</>,
    bEnd1: <>{p('M3 2h10v10H3zM12 13h10v9H12z', 'none', '#888', 1.3)}{p('M2 16h7v7H2z', '#999', '#777')}{p('M12 14l8-9 2 2-7 9z', '#9a9a9a', '#777')}</>,
    bEnd2: <>{p('M10 3q-7-3-8 2t6 6', 'none', '#888', 1.6)}{cube(3, 12, 12, GREY)}{p('M11 14l9-12 3 3-8 12zM16 18h5v5h-5z', '#a59a84', '#888')}</>,
    bEnd3: <>{p('M10 3q-7-3-8 2t6 6', 'none', '#888', 1.6)}{p('M12 6h7v7l4 2v4l-9 5-10-4v-4l8-3z', '#8c90a8', '#777')}</>,
    // resource tabs
    tAsm: <>{cube(2, 1, 8, GOLD)}{cube(6, 5, 8, GOLD)}{p('M14 13h9', 'none', '#111', 1.5)}{p('M6 14v9M6 18h5', 'none', '#1a1aa0', 1.4)}{cube(13, 15, 8, GOLD)}</>,
    tCon: <>{p('M4 1l7 5-7 5zM20 1l-7 5 7 5z', '#1a1ab8', '#1a1ab8')}{p('M12 0v24', 'none', '#111', 0.8)}{p('M1 15h9v8H1z', '#ffee3a', '#6a5a10')}{p('M14 14l9 9h-9z', '#c81818', '#700')}</>,
    tPart: <>{p('M2 3q4-2 9 0v7q-5 2-9 0z', '#c878b8', '#802870')}{p('M14 9h9', 'none', '#111', 1.4)}{p('M6 12v11M6 18h5', 'none', '#1a1aa0', 1.4)}<circle cx="17" cy="18" r="4.4" fill="#fff" stroke="#903080" strokeWidth="1.2" /><circle cx="17" cy="18" r="1.6" fill="none" stroke="#903080" /></>,
    tClock: <><circle cx="12" cy="12" r="10.5" fill="#dce6fa" stroke="#667" strokeWidth="2" />{p('M12 5v8h7', 'none', '#1a1a50', 1.5)}<circle cx="12" cy="12" r="8" fill="none" stroke="#223" strokeWidth="1" strokeDasharray="1 3.2" /></>,
    tRole: <>{p('M10 3q6-3 12-1l-1 4-4-2-5 8-2-2 4-6-3 1z', '#d0d0d0', '#444')}{p('M3 11l3 1 0 4 4 0 1-3 4 3-1 3 5 4-12 0-5-7z', '#9aa4b8', '#444')}<ellipse cx="6" cy="21" rx="4" ry="3" fill="#f4a020" /></>,
};

// ---------- tile text styles ----------
const GRN = 'text-[12px] leading-3 font-bold text-[#128a1c]';
const GRNM = "font-['Liberation_Mono',monospace] text-[13px] leading-3 font-bold text-[#128a1c]";
const ORG = 'text-[12px] leading-3 text-[#f2643a]';
const BLK = 'text-[12px] leading-3 font-bold text-black';
const BLK3 = 'text-[8px] leading-3 font-bold text-black';
const BLU3 = 'text-[8px] leading-3 font-bold text-[#3535e0]';
const MOVE = 'self-end text-[9px] leading-[10px] font-bold text-[#3a3af0]';
const MONO = "font-['Liberation_Mono',monospace]";
const SERIF = "font-['Liberation_Serif',serif]";
const CHAR = 'text-[22px] leading-6 font-bold';
const SPLIT = 'text-[12px] leading-3 bg-linear-to-r from-50% to-50% bg-clip-text text-transparent';
const TEAL = 'bg-[#a9dcc8]';

const ic = (icon: string, drop = false): Item => ({ icon, drop });
const tile = (lines: Line[], drop = false, bg = 'bg-white'): Item => ({ lines, drop, bg });
const SEP: Item = { sep: true };

const serifSize: Record<number, string> = {
    2: 'text-[18px] leading-6 font-bold',
    3: 'text-[13px] leading-6 font-bold',
    4: 'text-[9px] leading-6 font-bold',
};
const moveSize: Record<number, string> = {
    2: 'text-[16px] leading-[14px]',
    3: 'text-[13px] leading-[14px]',
};
const monoSize: Record<number, string> = {
    2: 'text-[20px] leading-6',
    3: 'text-[13px] leading-6 font-bold',
    4: 'text-[10px] leading-6 font-bold',
};
const serif = (t: string) => tile([[t, `${SERIF} ${serifSize[t.length]}`]], true);
const mono = (t: string) => tile([[t, `${MONO} ${monoSize[t.length]}`]], true);
const moved = (t: string) => tile([[t, `${SERIF} ${moveSize[t.length]}`], ['移', MOVE]], true);
const moved2 = (t: string) =>
    tile([[t, `${MONO} font-bold leading-[14px] ${t.length === 4 ? 'text-[10px]' : 'text-[13px]'}`], ['移', MOVE]], true);

const SearchBox = () => (
    <div className="mx-[2px] flex h-6 w-36 items-center border border-[#9a9a9a] bg-white pr-1 pl-1">
        <input aria-label="查找命令" placeholder="查找命令" className="w-full min-w-0 bg-transparent text-[12px] outline-none placeholder:text-[#a0a0a0]" />
        <svg viewBox="0 0 16 16" className="h-4 w-4 shrink-0">
            <circle cx="10" cy="5.5" r="4.5" fill="none" stroke="#333" strokeWidth="1.3" />
            <path d="M6.5 9L2 14" stroke="#333" strokeWidth="2" />
        </svg>
    </div>
);

const rows: { items: Item[]; gap?: boolean }[][] = [
    [
        {
            items: [
                { icon: 'logo', text: '启动', drop: true }, ic('new'), ic('open'), ic('save'), SEP, ic('cut'), ic('copy'), ic('paste'), SEP,
                ic('undo', true), ic('redo'), SEP, ic('window', true), SEP, ic('info'), SEP, { node: <SearchBox /> },
            ],
        },
        { items: [ic('fit', true), ic('orient', true), ic('cubeBlue', true), ic('clip'), ic('clip2', true), ic('square', true), SEP, ic('door'), ic('doors')] },
        { items: [ic('layers'), ic('wcs', true), SEP, ic('hand'), ic('parrot'), SEP, ic('hide', true), SEP, ic('measure', true), ic('ruler')] },
        {
            items: [
                ic('hsize'), ic('wsize', true), ic('bolt', true), ic('bow', true), ic('boxhand', true), ic('pencilbox', true),
                ic('aa', true), ic('magA'), ic('aToA', true),
            ],
        },
    ],
    [
        {
            items: [
                ic('plane', true), ic('extrude'), ic('revolve'), ic('hole'), ic('emboss'), ic('fan'), ic('pocket'), SEP,
                ic('draft'), ic('pattern'), ic('cubes'), ic('mirror'), ic('unite', true), ic('blocks'), ic('trim'), ic('split'),
                ic('wallblk'), ic('unform'), SEP, ic('edgeblend'), ic('faceblend'), ic('chamfer'), ic('draftbody'), ic('shell'),
            ],
        },
        { items: [ic('s1', true), ic('s2', true), ic('s3'), ic('s4', true), ic('s5', true), ic('s6', true), ic('s7'), ic('s8'), ic('s9', true)] },
        { items: [ic('ruled'), ic('mesh'), ic('nside'), ic('enlarge'), ic('xform'), ic('ribbon'), ic('tube'), ic('flag', true)] },
        {
            items: [
                tile([['定', 'self-start text-[12px] leading-3 font-bold text-[#f01818]'], ['向', 'self-end text-[12px] leading-3 font-bold text-[#f01818]']]),
                ic('ybox', true),
                tile([['绝', 'self-start text-[12px] leading-3 font-bold text-[#f01818]'], ['对', 'self-end text-[12px] leading-3 font-bold text-[#f01818]']]),
            ],
        },
    ],
    [
        {
            items: [
                tile([['实体', GRN], ['UCS', `${MONO} text-[13px] leading-3 text-[#f2643a]`]], true),
                tile([['DWG', GRNM], ['零件', BLK]]),
                tile([['DWG', GRNM], ['组装', ORG]]),
                tile([['BOM', GRNM], ['标准件', BLU3]]),
                tile([['标准', GRN], ['转换', BLK]]),
            ],
        },
        {
            items: [
                tile([['孔加', GRN], ['注解', ORG]]),
                tile([['面加', GRN], ['注解', BLK]]),
                tile([['检查', 'text-[12px] leading-3 text-[#4cc04c]'], ['注解', ORG]]),
                tile([['BOM', GRNM], ['料表', ORG]], true),
                tile([['DWG', GRNM], ['ALL', `${MONO} text-[13px] leading-3 font-bold`]]),
            ],
        },
        {
            items: [
                tile([['MV', `${MONO} text-[18px] leading-[14px] font-bold text-[#1414e0]`], ['移动', 'text-[9px] leading-[10px] font-bold']], true),
                ic('brush', true), ic('legs', true),
                tile([['面', 'text-[12px] leading-3 font-bold'], ['拉伸', 'text-[12px] leading-3 font-bold text-[#7c1818]']], false, TEAL),
                ic('plus', true),
                tile([['模', `${CHAR} text-[#f2dc2a] [-webkit-text-stroke:2px_#222] [paint-order:stroke]`]], true, 'bg-transparent'),
                tile([['夹', `${CHAR} text-[#f2dc2a] [-webkit-text-stroke:2px_#222] [paint-order:stroke]`]], true),
                tile([['刀口', 'text-[12px] leading-3'], ['绘制', 'text-[12px] leading-3 text-[#fcb884]']]),
                ic('cloth', true),
                tile([['孔', 'text-[15px] leading-[14px] font-bold text-[#0c7a20]'], ['点动', 'text-[9px] leading-[10px] font-bold text-[#6a1010]']], true, TEAL),
                tile([['调', 'text-[15px] leading-[14px] font-bold text-[#e01818]'], ['面大小', 'text-[8px] leading-[10px]']]),
                tile([['M4', `${MONO} text-[20px] leading-6 font-bold`]], true),
                tile([['N4', `${SERIF} text-[19px] leading-6 text-[#f0764a]`]], true),
                tile([['M4', `${MONO} text-[20px] leading-6`]], true, 'bg-[#62acc8]'),
                tile([['孔', 'text-[15px] leading-[14px] font-bold text-[#101090]'], ['自动', 'text-[9px] leading-[10px] font-bold text-[#6a1010]']], true, TEAL),
                tile([['牙', 'text-[15px] leading-[14px] font-bold text-[#e01818]'], ['自动', 'text-[9px] leading-[10px] font-bold']], true),
                tile([['挂,', 'self-start text-[12px] leading-3 font-bold'], ['台', 'self-end text-[12px] leading-3 font-bold']], true),
            ],
        },
        {
            items: [
                tile([['实体', `${SPLIT} from-[#222] to-[#f4d020]`], ['颜色', `${SPLIT} from-[#3030e0] to-[#20d020]`]], true),
                tile([['加工', BLK], ['面色', `${SPLIT} font-bold from-[#f03030] to-[#1a9a30]`]], true),
                tile([['材质', BLK], ['体色', `${SPLIT} font-bold from-[#7a30b0] to-[#f8b8d0]`]], true),
                tile([['模板', BLK], ['体色', 'text-[12px] leading-3 text-[#4a78b8]']], true),
                ic('swirl'), ic('orb'),
                tile([['原', 'text-[22px] leading-6 italic']], true),
                ic('gears', true),
            ],
        },
        {
            items: [
                ic('diamond'),
                tile([['干', 'self-start text-[13px] leading-3 font-bold'], ['涉', 'self-end text-[13px] leading-3 text-[#e82020]']]),
                tile([['单', `${CHAR} text-[#b85c28]`]], true),
                ic('scissors', true),
                tile([['导出', BLK], ['部件', 'text-[10px] leading-3 text-[#fca860]']], true),
                tile([[':\\', 'text-[20px] leading-6 font-bold']]),
                tile([['图层', 'text-[12px] leading-3 text-[#3cc43c]'], ['开关', 'text-[12px] leading-3']], true),
            ],
        },
    ],
    [
        {
            items: [
                tile([['我的', GRN], ['标准件', BLK3]], true),
                tile([['3D', `${MONO} text-[15px] leading-3 font-bold text-[#128a1c]`], ['图库', ORG]]),
                ic('genie', true),
            ],
        },
        { gap: true, items: ['DIE2', 'PS2', 'PPS2', 'PH2', 'LB2'].map(mono) },
        {
            items: [
                tile([['料带', BLK]], true),
                tile([['冲床', BLK], ['UP', GRNM]], true, TEAL),
                tile([['标件', BLK], ['UP', GRNM]], true, TEAL),
                ...['U1', 'U2', 'UP', 'UB', 'PH'].map(serif),
                mono('PU'),
                ...['PPS', 'PS', 'DIE', 'GU', 'LB', 'LP', 'B2', 'B1'].map(serif),
                tile([['O', `${SERIF} text-[26px] leading-6 font-bold text-[#f4d81a] [-webkit-text-stroke:2px_#222] [paint-order:stroke]`]], true, TEAL),
                serif('TEMP'),
                ...['全', '上', '下', '中', '关'].map((c) => tile([[c, `${CHAR} text-[#12b81c] [-webkit-text-stroke:2px_#063a0a] [paint-order:stroke]`]], false, TEAL)),
                tile([['导图', 'text-[12px] leading-3'], ['层', 'text-[12px] leading-3']]),
                mono('PG'),
            ],
        },
    ],
];

const moveBar: Item[] = [
    ...['U1', 'U2', 'UP', 'UB', 'PH', 'PU', 'PPS', 'PS', 'DIE', 'GU', 'LB', 'LP', 'B2', 'B1'].map(moved),
    ...['DIE2', 'PS2', 'PPS2', 'PH2', 'LB2'].map(moved2),
    mono('PG'),
];

const sketchBar: Item[] = [
    ic('sketch'), { icon: 'finish', text: '完成草图' }, ic('bSpl'), ic('bLine'), ic('bArc'), ic('bCircle'), ic('bFillet'), ic('bChamfer'),
    ic('bRect'), ic('bStudio'), ic('bPlus'), ic('bOff', true), SEP, ic('bTrim1'), ic('bTrim2'), ic('bTrim3'), SEP, ic('bDim', true), SEP,
    ic('bGeo'), ic('bSym'), ic('bCon', true), SEP, ic('bEnd1'), ic('bEnd2'), ic('bEnd3'),
];

const menus: [string, string][] = [
    ['文件', 'F'], ['编辑', 'E'], ['视图', 'V'], ['插入', 'S'], ['格式', 'R'], ['工具', 'T'], ['装配', 'A'], ['产品制造信息', 'M'],
    ['信息', 'I'], ['分析', 'L'], ['首选项', 'P'], ['窗口', 'O'], ['GC工具箱', ''], ['帮助', 'H'], ['PressUG V6.32', ''],
];

const palette: string[][] = [
    ['diamond', 'h2', 'trim', 'h4', 'h5', 'h6', 'draft', 'unform', 'h9', 'h10', 'h11', 'h12', 'h13', 'h14', 'draftbody', 'h16', 'h17', 'h18', 'mesh'],
    ['i1', 'i2', 'enlarge', 'i4', 'i5', 'i6', 'i7', 'i8', 'i9', 'i10', 'i11', 'i12', 'i13', 'i14', 'i15', 'i16', 'i17', 'i18', 'i19'],
    ['j1', 'j2', 'j3', 'j4', 'j5', 'j6', 'char', 'text', 'j9', 'j10', 'j11', 'nside', 'j13', 'j14', 'j15', 'j16', 'j17'],
];

// ---------- widgets ----------
const Icon = ({ name, className = 'h-6 w-6' }: { name: string; className?: string }) => (
    <svg viewBox="0 0 24 24" className={`shrink-0 overflow-visible ${className}`} aria-hidden="true">{icons[name]}</svg>
);

const Arrow = ({ className = '' }: { className?: string }) => (
    <svg viewBox="0 0 6 4" className={`h-[3px] w-[5px] ${className}`} aria-hidden="true"><path d="M0 0h6L3 4z" fill="currentColor" /></svg>
);

const Tile = ({ lines, bg }: { lines: Line[]; bg?: string }) => (
    <span className={`flex h-6 w-6 shrink-0 flex-col items-center justify-center whitespace-nowrap ${bg ?? ''}`}>
        {lines.map(([text, cls], i) => (
            <span key={i} className={cls}>{text}</span>
        ))}
    </span>
);

const Tool = ({ item }: { item: Item }) => {
    if (item.sep) return <span className="mr-[3px] ml-[2px] h-[30px] w-px bg-white shadow-[-1px_0_0_#b8b8b8]" />;
    if (item.node) return <>{item.node}</>;
    const label = item.text ?? item.lines?.map((l) => l[0]).join('') ?? item.icon;
    return (
        <>
            <button
                type="button"
                aria-label={label}
                className={`flex h-[30px] shrink-0 items-center ${item.text ? 'gap-1 pl-[3px]' : 'w-[31px] justify-center'} ${item.text === '启动' ? 'w-[55px]' : ''} ${item.text === '完成草图' ? 'w-[82px] text-[#a0a0a0]' : 'text-black'}`}
            >
                {item.icon ? <Icon name={item.icon} /> : <Tile lines={item.lines ?? []} bg={item.bg} />}
                {item.text && <span className="text-[12px] whitespace-nowrap">{item.text}</span>}
            </button>
            {item.drop && (
                <button type="button" aria-label={`${label} 选项`} className="flex h-[30px] w-3 shrink-0 items-center justify-center text-black">
                    <Arrow />
                </button>
            )}
        </>
    );
};

const Grip = () => <span className="mr-[1px] ml-[4px] h-6 w-[3px] shrink-0 border-l-2 border-dotted border-[#a8a8a8]" />;

const Toolbar = ({ items, gap }: { items: Item[]; gap?: boolean }) => (
    <div role="toolbar" className={`flex h-[34px] shrink-0 items-center border-t border-r border-b border-t-white border-r-[#bdbdbd] border-b-[#bdbdbd] bg-linear-to-b from-[#e2e2e2] to-[#d6d6d6] ${gap ? 'ml-[43px]' : ''}`}>
        <Grip />
        {items.map((item, i) => (
            <Tool key={i} item={item} />
        ))}
        <button type="button" aria-label="更多" className="flex h-[30px] w-[13px] shrink-0 items-end pb-[6px] pl-[3px] text-black">
            <Arrow />
        </button>
    </div>
);

const Combo = ({ id, label, value, width }: { id: string; label: string; value: string; width: string }) => (
    <div className={`flex h-[21px] items-stretch border border-[#555] bg-white ${width}`}>
        <label htmlFor={id} className="sr-only">{label}</label>
        <select id={id} className="min-w-0 flex-1 appearance-none overflow-visible bg-white pl-[2px] text-[12px] outline-none">
            <option>{value}</option>
        </select>
        <span className="flex w-4 items-center justify-center border-l border-[#4a7ab0] bg-linear-to-b from-[#d4e8fa] to-[#5aa4e4]">
            <svg viewBox="0 0 10 7" className="h-[7px] w-[10px]"><path d="M0 0h10L5 7z" fill="#102040" /></svg>
        </span>
    </div>
);

const Snap = ({ name, boxed = false }: { name: string; boxed?: boolean }) => (
    <button type="button" aria-label={name} className={`flex h-[21px] w-[23px] shrink-0 items-center justify-center ${boxed ? 'rounded-sm border border-[#555] bg-white' : ''}`}>
        <Icon name={name} className="h-4 w-4" />
    </button>
);

const Line21 = () => <span className="mx-[2px] h-7 w-px shrink-0 bg-white shadow-[-1px_0_0_#b8b8b8]" />;

const Hole = ({ id, cx, cy, rx, ry }: { id: string; cx: number; cy: number; rx: number; ry: number }) => (
    <g>
        <clipPath id={id}><ellipse cx={cx} cy={cy} rx={rx} ry={ry} /></clipPath>
        <ellipse cx={cx} cy={cy} rx={rx} ry={ry} fill="url(#bore)" />
        <ellipse cx={cx} cy={cy + 39} rx={rx} ry={ry} fill="url(#sky)" stroke="#2b2b2b" strokeWidth="3" clipPath={`url(#${id})`} />
        <ellipse cx={cx} cy={cy} rx={rx} ry={ry} fill="none" stroke="#2b2b2b" strokeWidth="3" />
    </g>
);

const Boss = ({ cx, cy }: { cx: number; cy: number }) => (
    <g stroke="#2b2b2b" strokeWidth="3">
        <path d={`M${cx - 102} ${cy}v34a102 64 0 0 0 204 0v-34z`} fill="url(#bore)" />
        <ellipse cx={cx} cy={cy} rx="102" ry="64" fill="#cdcdcd" />
        <ellipse cx={cx} cy={cy} rx="54" ry="35" fill="url(#bore)" />
    </g>
);

const PLATE =
    'M210 408C210 382 230 367 255 360L310 346L430 316H485C505 318 510 329 530 329L870 248C905 243 915 254 940 253L1515 120Q1545 114 1570 122L1785 185Q1805 192 1814 208L1920 412L1932 560L2077 835L2060 880L2100 874L2170 857Q2230 848 2255 875Q2265 885 2275 905L2328 1008Q2335 1023 2350 1020L2380 1017L2465 1187L2027 1288C1960 1300 1930 1285 1922 1260L1842 1110C1828 1080 1790 1072 1742 1080L1015 1250C985 1256 972 1276 961 1286C950 1304 930 1312 910 1315L586 1392C555 1398 545 1413 535 1426C470 1493 390 1515 310 1513C200 1511 120 1467 88 1410L60 1353C40 1292 60 1240 160 1204L300 1169C318 1162 325 1152 335 1140L568 841L435 558C425 540 410 540 405 542L367 551C325 559 280 548 265 527L212 426Z';
const SLOT =
    'M1388 250C1388 205 1440 183 1498 183C1520 183 1540 187 1550 193L1703 262C1730 275 1738 295 1738 315C1735 355 1690 379 1635 379C1600 379 1575 370 1560 363L1425 300C1400 288 1388 270 1388 250Z';

const Bracket = () => (
    <g transform="translate(460 340) scale(.33333)" strokeLinejoin="round">
        {[39, 26, 13].map((dy) => (
            <path key={dy} d={PLATE} transform={`translate(2 ${dy})`} fill="url(#side)" stroke={dy === 39 ? '#2b2b2b' : 'none'} strokeWidth="3" />
        ))}
        <path d={PLATE} fill="#cbcbcb" stroke="#2b2b2b" strokeWidth="3" />
        <path d="M88 1410v38M535 1426v28M586 1392v38M910 1315v38M961 1286v38M1015 1250v38M1742 1080v38M1842 1110v36M1922 1260v38M2027 1288v38M265 527v38M367 551v38M407 542v38M434 556v32" stroke="#2b2b2b" strokeWidth="3" />
        <Hole id="c1" cx={1206} cy={779} rx={412} ry={271} />
        <Hole id="c2" cx={813} cy={556} rx={53} ry={34} />
        <Hole id="c3" cx={1314} cy={439} rx={53} ry={34} />
        <Hole id="c4" cx={954} cy={1085} rx={62} ry={40} />
        <Hole id="c5" cx={815} cy={1246} rx={52} ry={34} />
        <Hole id="c6" cx={317} cy={1362} rx={124} ry={80} />
        <Hole id="c7" cx={1695} cy={913} rx={62} ry={40} />
        <Boss cx={395} cy={384} />
        <Boss cx={2117} cy={1098} />
        <clipPath id="slot"><path d={SLOT} /></clipPath>
        <g clipPath="url(#slot)">
            <rect x="1380" y="170" width="370" height="220" fill="#5a5a5a" />
            <rect x="1380" y="170" width="120" height="100" fill="url(#cave)" />
            <path transform="translate(0 38)" d={SLOT} fill="url(#sky)" stroke="#2b2b2b" strokeWidth="3" />
            <path d="M1550 193v40M1703 262v38" stroke="#2b2b2b" strokeWidth="3" />
        </g>
        <path d={SLOT} fill="none" stroke="#2b2b2b" strokeWidth="3" />

        {/* upright flange */}
        <g transform="translate(1320 0)" stroke="#2b2b2b" strokeWidth="3">
            <path d="M554 543C554 522 590 532 610 508L614 560L575 562C560 562 554 553 554 543Z" fill="#888" />
            <path d="M575 524L612 508V558L575 562Z" fill="url(#cave)" />
            <path d="M718 862C720 845 735 845 742 842V880C728 880 718 875 718 862Z" fill="#888" />
            <path d="M592 32L645 20L652 30L602 38Z" fill="#c4c4c4" />
            <path d="M592 32L602 38L725 270C735 285 737 300 738 325L736 358L728 375C720 430 738 490 746 532L758 835L614 562L603 350Z" fill="#646464" />
            <path d="M602 38L648 28L768 262L725 270Z" fill="#cfcfcf" />
            <path d="M725 270L768 262C780 285 785 300 785 320L738 326C738 305 735 285 725 270Z" fill="url(#shine)" />
            <path d="M738 326L785 320L783 350L736 360Z" fill="#707070" />
            <path d="M736 360L783 350L776 368C770 410 778 460 790 492L740 503C724 450 724 400 728 375Z" fill="url(#cup)" />
            <path d="M740 503L790 492L794 525L746 532Z" fill="url(#shine)" />
            <path d="M746 532L794 525L806 842C795 872 775 882 742 880V842L760 836Z" fill="#595959" />
            <path d="M608 352L655 343C690 370 708 470 704 540L658 550C668 490 645 380 608 352Z" fill="url(#shine)" />
            <ellipse cx="635" cy="452" rx="25" ry="100" transform="rotate(-9 635 452)" fill="#646464" />
            <ellipse cx="632" cy="452" rx="14" ry="50" transform="rotate(-9 632 452)" fill="url(#cup)" />
        </g>

        {/* bent hook */}
        <g transform="translate(1320 0)" stroke="#2b2b2b" strokeWidth="3">
            <path d="M1073 1240L1148 1225L1160 1325L1105 1255C1103 1300 1115 1330 1125 1345L1145 1390C1147 1420 1160 1440 1150 1463L1108 1390C1085 1340 1078 1300 1073 1240Z" fill="#5e5e5e" />
            <path d="M1106 1258L1158 1318L1190 1380C1202 1400 1203 1420 1204 1447L1150 1462L1145 1388L1122 1340C1108 1310 1104 1290 1106 1258Z" fill="url(#hook)" />
            <path d="M1120 1340L1166 1332M1145 1388L1190 1380" />
            <path d="M1148 1187L1148 1225L1155 1318L1198 1307L1196 1215C1197 1195 1180 1182 1148 1185L705 1288V1327L1148 1225" fill="#5a5a5a" />
            <path d="M1152 1302L1198 1295" />
            <path d="M1060 1018L1085 1013C1100 1016 1105 1025 1110 1035L1192 1194C1175 1182 1160 1184 1145 1187Z" fill="url(#bend)" stroke="#777" />
            <path d="M1060 1018L1145 1187" />
        </g>
    </g>
);

const Stops = ({ s }: { s: [string, string][] }) => (
    <>{s.map(([o, c]) => <stop key={o} offset={o} stopColor={c} />)}</>
);

const Scene = () => (
    <svg viewBox="38 251 1881 743" preserveAspectRatio="xMidYMid slice" className="absolute inset-0 h-full w-full" role="img" aria-label="ARM-HR-GUIDE-R">
        <defs>
            <linearGradient id="sky" gradientUnits="userSpaceOnUse" x1="0" x2="0" y1="-267" y2="1962"><Stops s={[['0', '#b6b7b9'], ['.2', '#c4c5c7'], ['.48', '#d5d6d8'], ['.8', '#e6e7e9'], ['1', '#e7e9ea']]} /></linearGradient>
            <linearGradient id="side" gradientUnits="userSpaceOnUse" x1="50" x2="2500" y1="0" y2="0"><Stops s={[['0', '#8c8c8c'], ['.03', '#707070'], ['.1', '#484848'], ['.15', '#606060'], ['.195', '#808080'], ['.22', '#5a5a5a'], ['.35', '#5a5a5a'], ['.37', '#7a7a7a'], ['.395', '#5a5a5a'], ['.7', '#5a5a5a'], ['.72', '#484848'], ['.745', '#666666'], ['.77', '#686868'], ['.79', '#484848'], ['.81', '#5a5a5a'], ['1', '#5a5a5a']]} /></linearGradient>
            <linearGradient id="bore"><Stops s={[['0', '#8c8c8c'], ['.45', '#474747'], ['1', '#787878']]} /></linearGradient>
            <linearGradient id="cave"><Stops s={[['0', '#909090'], ['1', '#4a4a4a']]} /></linearGradient>
            <linearGradient id="shine" x1="0" x2="0" y1="0" y2="1"><Stops s={[['0', '#bdbdbd'], ['.3', '#e6e6e6'], ['1', '#646464']]} /></linearGradient>
            <linearGradient id="cup" x1="0" x2="0" y1="0" y2="1"><Stops s={[['0', '#444444'], ['.5', '#888888'], ['1', '#f0f0f0']]} /></linearGradient>
            <linearGradient id="hook" x1="0" x2="0" y1="0" y2="1"><Stops s={[['0', '#555555'], ['.3', '#d8d8d8'], ['.65', '#cfcfcf'], ['1', '#5a5a5a']]} /></linearGradient>
            <linearGradient id="bend" x1="0" x2="1" y1=".5" y2=".3"><Stops s={[['0', '#c4c4c4'], ['.5', '#ececec'], ['1', '#909090']]} /></linearGradient>
        </defs>
        <Bracket />
        <g stroke="#1c1c1c" shapeRendering="crispEdges">
            <path d="M38 620.5H872M936 620.5H1919M904.5 251V587M904.5 652V994" />
        </g>
        <g transform="translate(0 880) scale(.33333)">
            <path d="M275 112L340 95L365 145V195L300 210L273 168Z" fill="#d4d5d6" stroke="#a4a6a8" strokeWidth="3" />
            <path d="M340 95V150L365 195M340 150L275 166M275 112L300 165V210M300 165L365 145" fill="none" stroke="#b0b2b4" strokeWidth="3" />
            <path d="M293 155L262 92" stroke="#c81c24" strokeWidth="9" />
            <path d="M255 80L272 98L258 104Z" fill="#c81c24" />
            <path d="M293 155L390 133" stroke="#1f8a1f" strokeWidth="8" />
            <path d="M414 127L384 126L388 142Z" fill="#1f8a1f" />
            <path d="M294 155V235" stroke="#1020a0" strokeWidth="9" />
            <path d="M297 250L287 230H306Z" fill="#1020a0" />
            <circle cx="293" cy="155" r="13" fill="#e4e4e4" stroke="#999" />
            <g fontSize="34" fontFamily="Liberation Sans">
                <text x="238" y="84" fill="#d84848">X</text>
                <text x="412" y="136" fill="#3a9a4a">Y</text>
                <text x="286" y="275" fill="#3a6ae0">Z</text>
            </g>
        </g>
    </svg>
);

const Palette = () => (
    <section className="absolute top-[33px] right-[36px] w-[597px] overflow-hidden rounded-md border border-black bg-[#1c1c1e]">
        <header className="flex h-[21px] items-center bg-linear-to-b from-[#5c5c60] from-30% to-[#1c1c1e] to-40% pl-[7px] text-white">
            <h2 className="flex-1 text-[12px] leading-[18px] font-bold">hehong</h2>
            <button type="button" aria-label="选项" className="flex h-full w-5 items-center justify-center"><Arrow /></button>
            <button type="button" aria-label="关闭" className="flex h-full w-5 items-center justify-center border-l border-[#777]">
                <svg viewBox="0 0 10 10" className="h-[10px] w-[10px]"><path d="M1 1l8 8M9 1L1 9" stroke="#fff" strokeWidth="2.4" /></svg>
            </button>
        </header>
        <div className="bg-linear-to-b from-[#e8e8e8] to-[#d2d2d2] py-[2px] pl-[2px]">
            {palette.map((row, r) => (
                <div key={r} className="flex h-[30px] items-center">
                    {row.map((name) => (
                        <button key={name} type="button" aria-label={name} className={`flex h-[30px] items-center justify-center ${name === 'text' ? 'w-14' : 'w-[31px]'}`}>
                            {name === 'text' && <span className="text-[12px]">导出部件</span>}
                            {name === 'char' && <span className="h-6 w-6 bg-white text-[22px] leading-6 font-bold italic">关</span>}
                            {name !== 'text' && name !== 'char' && <Icon name={name} />}
                        </button>
                    ))}
                </div>
            ))}
        </div>
        <div className="h-2 border-t border-black" />
    </section>
);

const AcadIcon = () => (
    <svg viewBox="0 0 16 16" className="h-4 w-4"><rect width="16" height="16" fill="#2a90a8" /><path d="M1 1h4v14H1zM6 1h9v3H6z" fill="#cfeef4" /><path d="M8 8q3-2 5 0v6M13 10q-5-1-5 2t5 1" fill="none" stroke="#fff" strokeWidth="1.6" /></svg>
);
const FolderIcon = () => (
    <svg viewBox="0 0 16 16" className="h-4 w-4"><path d="M1 0h11v10l2 1v5H1z" fill="#ffe08c" /><path d="M12 10l2 1v5h-2z" fill="#e8b84a" /></svg>
);
const PdfIcon = () => (
    <svg viewBox="0 0 16 16" className="h-4 w-4"><path d="M7 0l6 3v8l-6 4-6-4V3z" fill="#2a68d8" /><path d="M3 5l3 4 2-4" fill="none" stroke="#fff" strokeWidth="1.4" /><rect x="7" y="6" width="9" height="10" rx="1" fill="#e85060" /><path d="M10 14V9h2q2 2-2 3" fill="none" stroke="#fff" /></svg>
);

const tasks: { icon: React.ReactNode; label: string; active?: boolean }[] = [
    { icon: <FolderIcon />, label: '6LL095780-00-ARM...' },
    { icon: <FolderIcon />, label: '6LL095780-00-ARM...' },
    { icon: <AcadIcon />, label: 'AutoCAD 2005 - [f:\\...' },
    { icon: <AcadIcon />, label: 'AutoCAD 2005 - [G:...' },
    { icon: <Icon name="logo" className="h-4 w-4" />, label: 'NX 11.0.0.33 - 建模 ...', active: true },
    { icon: <PdfIcon />, label: '6LL09578000_01_JV...' },
];

const Taskbar = () => (
    <footer className="flex h-[30px] shrink-0 items-stretch border-b-2 border-[#0e3a56] bg-[#060606] text-white">
        <button type="button" aria-label="开始" className="flex w-10 items-center pt-[2px] pl-[9px]">
            <svg viewBox="0 0 16 16" className="h-4 w-4" fill="#fff"><path d="M0 2.2l7-1v6.3H0zM8 1l8-1v7.500H8zM0 8.500h7v6.300l-7-1zM8 8.500h8V16l-8-1z" /></svg>
        </button>
        {tasks.map((t, i) => (
            <button key={i} type="button" className={`flex w-40 items-stretch ${t.active ? 'bg-[#3c3c3c]' : 'px-1'}`}>
                <span className={`flex flex-1 items-center gap-[3px] border-b-2 border-[#5aa8dc] pt-1 text-[12px] whitespace-nowrap ${t.active ? 'pl-2' : 'pl-1'}`}>
                    {t.icon}
                    {t.label}
                </span>
            </button>
        ))}
        <div className="ml-auto flex items-center pt-[2px] pr-[23px]">
            <span className="mr-[14px] mb-1 flex h-[14px] w-[14px] items-center justify-center bg-white font-['Liberation_Sans'] text-[12px] text-black">M</span>
            <svg viewBox="0 0 16 16" className="mr-2 h-4 w-4"><path d="M8 0l7 3v9l-7 4-7-3V4z" fill="#3a7af0" /><path d="M8 0l7 3-7 4-7-3z" fill="#a8ccff" /><path d="M3 8h3M3 10h3" stroke="#fff" /></svg>
            <svg viewBox="0 0 16 16" className="mr-2 h-4 w-4"><path d="M3 1h10v14H3z" fill="#d02030" /><path d="M5 1v14M11 1v14" stroke="#fff" strokeWidth="1.4" strokeDasharray="2 1" /><path d="M6 8h4" stroke="#fff" strokeWidth="1.4" /></svg>
            <svg viewBox="0 0 16 16" className="mr-2 h-4 w-4"><path d="M7 0l6 2v5q0 5-6 8-6-3-6-8V2z" fill="#fff" /><path d="M7 0v15M1 7h12" stroke="#060606" /><path d="M11 7l5 9H6z" fill="#f8b818" /><path d="M11 10v3M11 14v1" stroke="#111" /></svg>
            <svg viewBox="0 0 16 16" className="mr-2 h-4 w-4"><circle cx="8" cy="8" r="7.6" fill="#e8dc18" /><circle cx="8" cy="8" r="5.6" fill="#2aa030" /><path d="M8 4v8M4 8h8" stroke="#fff060" strokeWidth="2.4" /></svg>
            <svg viewBox="0 0 16 16" className="mr-2 h-4 w-4" fill="none" stroke="#fff"><path d="M1 5.500h2l4-4v13l-4-4H1zM9 5.500q1.500 2.500 0 5M11 3.500q3 4.500 0 9M13 2q4 6 0 12" /></svg>
            <svg viewBox="0 0 16 16" className="mr-2 h-4 w-4" fill="none" stroke="#ddd" strokeWidth="1.3"><path d="M1 14Q2 3 14 2M4 15Q5 7 14 6M8 15Q8 10 14 10" /><circle cx="12" cy="13" r="1" fill="#ddd" /></svg>
            <span className="mr-[15px] text-[13px]">英</span>
            <span className="mr-[18px] flex h-[14px] w-[14px] items-center justify-center bg-white font-['Liberation_Sans'] text-[12px] text-black">M</span>
            <time className="mr-[20px] text-[12px]">21:45</time>
            <svg viewBox="0 0 16 16" className="h-4 w-4"><path d="M0 0h15v13H6l-3 3v-3H0z" fill="#fff" /><path d="M3 4h9M3 7h9M3 10h6" stroke="#111" /><circle cx="12" cy="12" r="3.500" fill="#fff" stroke="#111" /></svg>
        </div>
    </footer>
);

const WinButton = ({ label, d, red = false }: { label: string; d: string; red?: boolean }) => (
    <button type="button" aria-label={label} className={`flex h-5 w-5 items-center justify-center rounded-sm border ${red ? 'border-[#a03020] bg-linear-to-b from-[#f08a78] to-[#d03a22]' : 'border-[#4a4a4a] bg-linear-to-b from-[#5c5c5e] to-[#303032]'}`}>
        <svg viewBox="0 0 12 12" className="h-3 w-3"><path d={d} fill="none" stroke="#fff" strokeWidth="1.800" /></svg>
    </button>
);

const App: React.FC = () => {
    return (
        <div className="relative flex h-screen w-full flex-col overflow-hidden border-x border-[#1c5a7c] bg-[#d9d9d9] font-['Open_Sans','Noto_Sans_CJK_SC',sans-serif] text-black">
            <header className="flex h-[27px] shrink-0 items-center border-t-3 border-[#2c5c7a] bg-[#1c1c1c] pr-[2px] pb-px pl-[2px] text-white">
                <Icon name="logo" className="mr-[5px] h-4 w-4" />
                <h1 className="flex-1 font-['Roboto','Noto_Sans_CJK_SC',sans-serif] text-[13px] leading-5 whitespace-nowrap">NX 11.0.0.33 - 建模 - [6LL09578000_JVB51897_ARM-HR-GUIDE-R-H44X_stp.prt]</h1>
                <span className="mr-[23px] font-['Open_Sans',sans-serif] text-[13px] leading-5 font-extrabold">SIEMENS</span>
                <div className="flex gap-[3px]">
                    <WinButton label="最小化" d="M2 9.500h6" />
                    <WinButton label="还原" d="M1 5h7v6H1zM4 5V1h7v7H8" />
                    <WinButton label="关闭" d="M1 1l10 10M11 1L1 11" red />
                </div>
            </header>

            <nav className="flex h-7 shrink-0 items-center bg-linear-to-b from-[#e8e8e8] to-[#e0e0e0] pr-1 pb-px">
                <Grip />
                <Icon name="part" className="mr-[6px] h-[15px] w-[15px]" />
                {menus.map(([name, key]) => (
                    <button key={name} type="button" className={`mr-[14px] text-[12px] whitespace-nowrap ${key === 'P' ? 'ml-2' : ''}`}>
                        {name}
                        {key && <>(<u>{key}</u>)</>}
                    </button>
                ))}
                <button type="button" aria-label="关闭部件" className="ml-auto flex h-4 w-4 items-center justify-center rounded-sm border border-[#777] bg-[#eee]">
                    <svg viewBox="0 0 10 10" className="h-[9px] w-[9px]"><path d="M1 1l8 8M9 1L1 9" stroke="#444" strokeWidth="2.200" /></svg>
                </button>
            </nav>

            <div className="shrink-0 border-b border-[#8c8c8c] bg-linear-to-b from-[#e2e2e2] to-[#cacaca]">
                {rows.map((bars, r) => (
                    <div key={r} className="flex h-[34px]">
                        {bars.map((bar, i) => (
                            <Toolbar key={i} items={bar.items} gap={bar.gap} />
                        ))}
                    </div>
                ))}
                <div className="flex h-[27px]">
                    <div role="toolbar" className="flex h-[27px] items-center border-t border-r border-t-white border-r-[#bdbdbd] pb-[2px]">
                        <Grip />
                        {['实', '片', '面', '线', '组', '标', '释', '原'].map((c) => (
                            <button key={c} type="button" className="w-[19px] text-[12px]">{c}</button>
                        ))}
                        <button type="button" aria-label="更多" className="flex h-6 w-[13px] items-end pb-1 pl-[3px]"><Arrow /></button>
                    </div>
                </div>
            </div>

            <div className="flex h-[32px] shrink-0 items-center border-t border-[#f0f0f0] bg-linear-to-b from-[#cdcdcd] to-[#e0e0e0] pb-[2px] pl-1">
                <Combo id="filter" label="类型过滤器" value="无选择过滤器" width="w-[146px]" />
                <span className="w-[9px]" />
                <Combo id="scope" label="选择范围" value="整个装配" width="w-[154px]" />
                <span className="w-1" />
                <Snap name="sGrey" />
                <Line21 />
                <Snap name="sFilter" />
                <Snap name="sRed" />
                <button type="button" aria-label="选项" className="flex w-3 justify-center"><Arrow /></button>
                <Snap name="sUndo" />
                <Snap name="sBrush" />
                <Line21 />
                <Snap name="sMarq" />
                <button type="button" aria-label="选项" className="flex w-3 justify-center"><Arrow /></button>
                <Line21 />
                <Snap name="sEdge" />
                <Snap name="sCube" />
                <Line21 />
                <Snap name="pSnap" boxed />
                <Snap name="pEnd" boxed />
                <Snap name="pMid" boxed />
                <Snap name="pHook" />
                <Snap name="pZig" boxed />
                <Snap name="pSpl" boxed />
                <Snap name="pInt" />
                <Snap name="pCtr" boxed />
                <Snap name="pQuad" />
                <Snap name="pPlus" boxed />
                <Snap name="pOn" boxed />
                <Snap name="pFace" />
                <Line21 />
                <Snap name="pGrid" />
                <button type="button" aria-label="更多" className="mr-[5px] ml-auto pt-3"><Arrow /></button>
            </div>

            <main className="flex min-h-0 flex-1">
                <aside className="flex w-[30px] shrink-0 flex-col border-r border-[#777] bg-linear-to-r from-[#b4b4b4] to-[#a2a2a2] pl-1">
                    <button type="button" aria-label="资源条选项" className="flex h-[45px] items-center pb-4 pl-[3px]">
                        <svg viewBox="0 0 16 16" className="h-[14px] w-[14px]" fill="none" stroke="#222"><circle cx="8" cy="8" r="5" strokeWidth="1.600" /><circle cx="8" cy="8" r="6.800" strokeWidth="2" strokeDasharray="2 3.300" /><circle cx="8" cy="8" r=".8" fill="#222" stroke="none" /></svg>
                    </button>
                    {['tAsm', 'tCon', 'tPart', 'tClock', 'tRole'].map((t) => (
                        <button key={t} type="button" aria-label={t} className={`mb-[2px] flex h-10 items-center justify-center rounded-l border border-r-0 border-[#666] bg-[#dedede] ${t === 'tClock' ? 'mt-3' : ''}`}>
                            <Icon name={t} className="h-[22px] w-[22px]" />
                        </button>
                    ))}
                </aside>
                <div className="w-[7px] shrink-0 bg-[#ededed]" />
                <div className="relative flex-1 bg-[linear-gradient(#b6b7b9,#c4c5c7_20%,#d5d6d8_48%,#e6e7e9_80%,#e7e9ea)]">
                    <Scene />
                    <Palette />
                </div>
            </main>

            <div className="flex h-[34px] shrink-0 border-b border-[#c4c4c4] bg-[#dcdcdc]">
                <div role="toolbar" className="flex h-[34px] w-[221px] shrink-0 items-center border-t border-r border-t-white border-r-[#bdbdbd] bg-linear-to-b from-[#ececec] to-[#d4d4d4]">
                    <Grip />
                    <Tool item={ic('binoc', true)} />
                    <Tool item={ic('wire')} />
                    <Tool item={ic('greyAsm')} />
                    <Tool item={ic('addCmp', true)} />
                    <Tool item={ic('moveCmp')} />
                    <button type="button" aria-label="更多" className="mr-1 ml-auto flex h-6 flex-col items-center justify-between text-[12px] leading-[8px] font-bold">
                        »
                        <Arrow />
                    </button>
                </div>
                <Toolbar items={moveBar} />
                <Toolbar items={sketchBar} />
            </div>

            <div className="flex h-[22px] shrink-0 items-center border-b border-[#999] bg-[#d9d9d9] pr-[16px]">
                <span className="flex-1" />
                <span className="h-full w-px bg-[#f4f4f4] shadow-[-1px_0_0_#bbb]" />
                <span className="flex-1" />
                <span className="h-full w-px bg-[#f4f4f4] shadow-[-1px_0_0_#bbb]" />
                <span className="ml-[18px] h-full w-px bg-[#f4f4f4] shadow-[-1px_0_0_#bbb]" />
                <Icon name="finish" className="ml-[3px] h-4 w-4" />
                <svg viewBox="0 0 16 16" className="mr-[38px] ml-1 h-4 w-4"><path d="M1 4V1h3M12 1h3v3M15 12v3h-3M4 15H1v-3" fill="none" stroke="#fff" strokeWidth="1.500" /><rect x="3" y="3" width="10" height="10" fill="#fff" stroke="#222" /><rect x="5" y="5" width="6" height="6" fill="#2a68b8" /></svg>
                <span className="h-full w-px bg-[#f4f4f4] shadow-[-1px_0_0_#bbb]" />
            </div>

            <Taskbar />

            {/* blank popup with the card it overlaps */}
            <div className="absolute top-[69px] right-[10px] h-[46px] w-[163px] border-4 border-white bg-linear-to-b from-[#0a86bc] to-[#0a5c8c] shadow-[0_0_2px_1px_#888]" />
            <div className="absolute top-[25px] right-[19px] h-[85px] w-[175px] bg-white" />
        </div>
    );
};

export default App;
